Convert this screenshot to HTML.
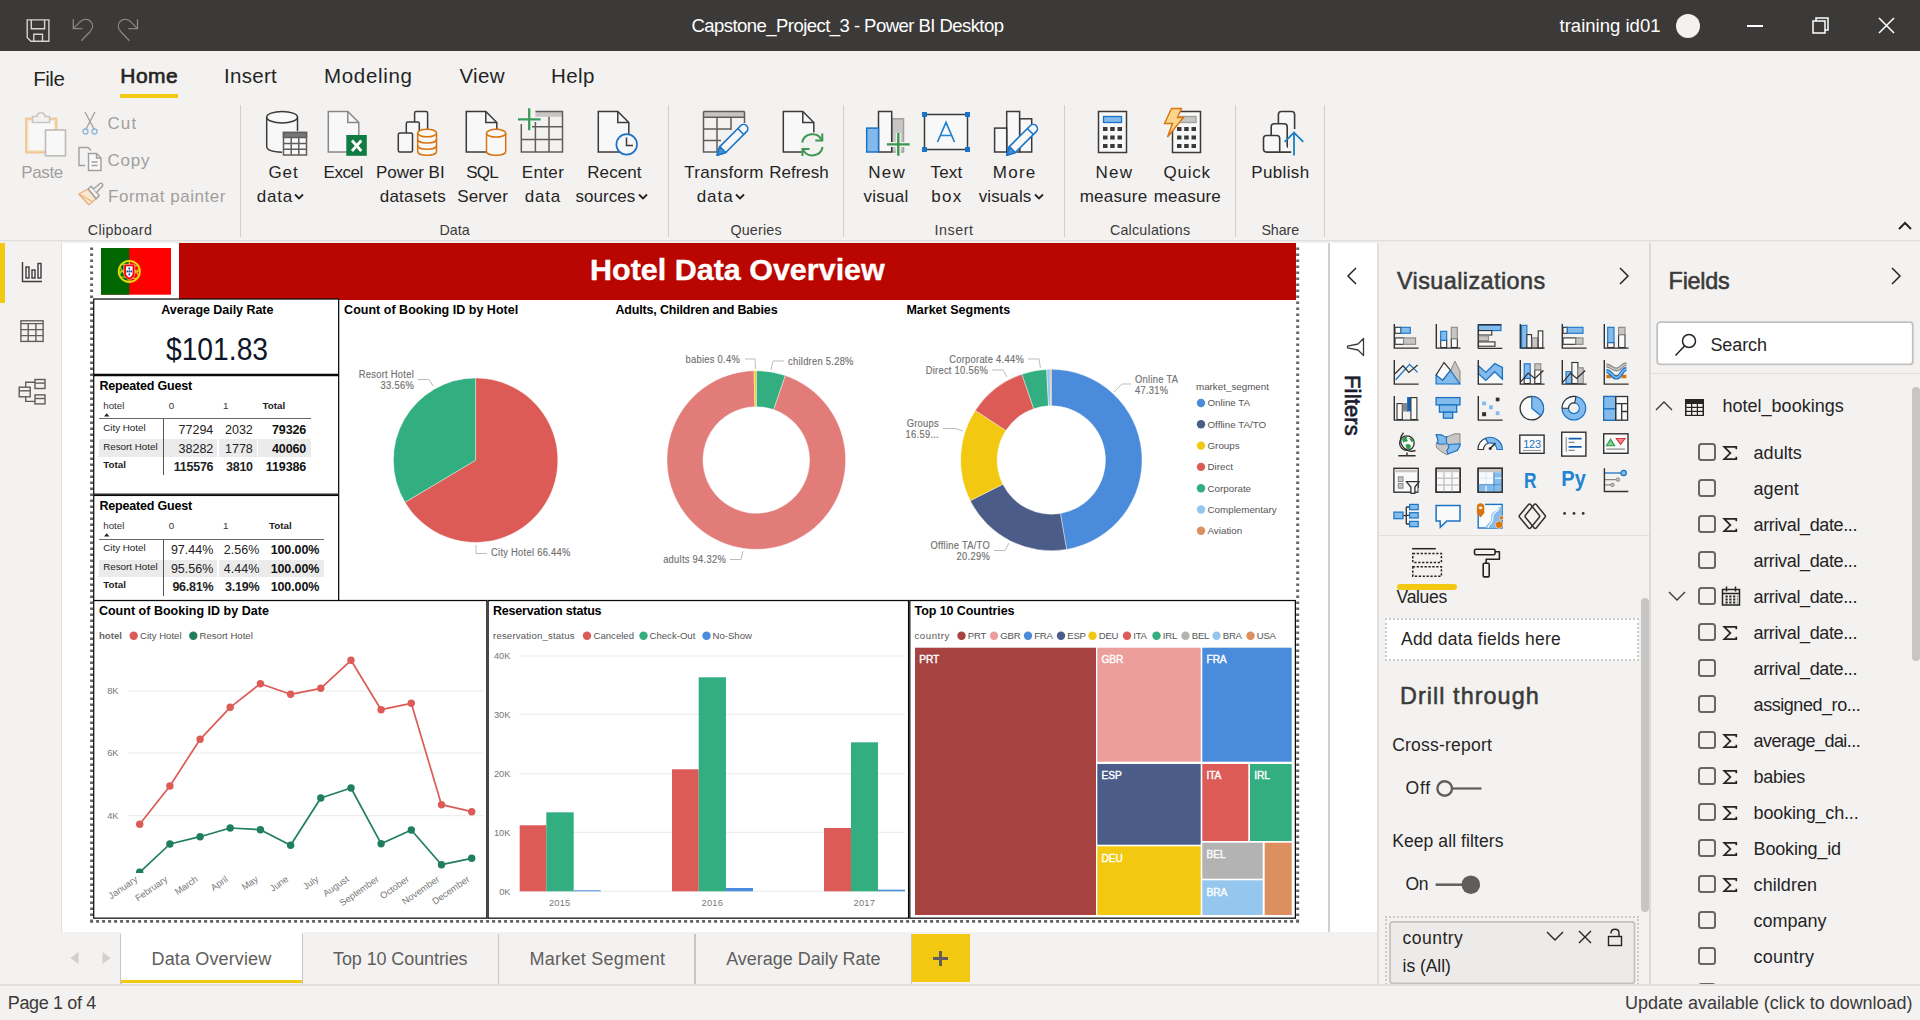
<!DOCTYPE html>
<html><head><meta charset="utf-8"><title>Capstone_Project_3 - Power BI Desktop</title>
<style>
html,body{margin:0;padding:0;}
body{width:1920px;height:1020px;overflow:hidden;background:#f3f2f1;position:relative;font-family:"Liberation Sans",sans-serif;}
.t{position:absolute;white-space:nowrap;line-height:1;font-family:"Liberation Sans",sans-serif;}
.r{position:absolute;display:block;}
svg text{font-family:"Liberation Sans",sans-serif;}
</style></head><body>
<div class="r" style="left:0.0px;top:0.0px;width:1920.0px;height:51.0px;background:#3b3a39;"></div>
<div class="t" style="left:691.5px;top:17.1px;font-size:18.5px;color:#ffffff;letter-spacing:-0.546px;">Capstone_Project_3 - Power BI Desktop</div>
<div class="t" style="left:1559.5px;top:17.1px;font-size:18.5px;color:#ffffff;letter-spacing:0.017px;">training id01</div>
<div class="r" style="left:1675.8px;top:14.0px;width:24.0px;height:24.0px;background:#f3f2f1;border-radius:50%;"></div>
<svg class="r" style="left:24.0px;top:15.5px;" width="28" height="28"><g fill="none" stroke="#d6d4d2" stroke-width="1.400">
<path d="M3.200 3.900H24.900V25.200H6.900L3.200 21.500Z"/><path d="M7.300 3.900V12.700H20.600V3.900"/><path d="M9.800 25.200V18.300H18.500V25.200"/></g></svg>
<svg class="r" style="left:68.0px;top:15.0px;" width="28" height="28"><g fill="none" stroke="#8a8886" stroke-width="1.300">
<path d="M5.300 4.200V13.700H14.500"/><path d="M5.600 13.400L11.500 7.400C14.500 4 19.500 3.300 22.500 6.300C25.500 9.300 25 13.500 22 16.800L13.300 25.700"/></g></svg>
<svg class="r" style="left:114.0px;top:15.0px;" width="28" height="28"><g fill="none" stroke="#8a8886" stroke-width="1.300">
<path d="M23.500 4.200V13.700H14.300"/><path d="M23.200 13.400L17.300 7.400C14.300 4 9.300 3.300 6.300 6.300C3.300 9.300 3.800 13.500 6.800 16.800L15.500 25.700"/></g></svg>
<div class="r" style="left:1747.0px;top:25.0px;width:16.0px;height:1.5px;background:#ffffff;"></div>
<svg class="r" style="left:1810.0px;top:14.5px;" width="22" height="22"><g fill="none" stroke="#fff" stroke-width="1.5"><rect x="3" y="6" width="12" height="12"/><path d="M6 6v-3h12v12h-3"/></g></svg>
<svg class="r" style="left:1876.4px;top:15.0px;" width="22" height="22"><g fill="none" stroke="#fff" stroke-width="1.5"><path d="M3 3l15 15M18 3L3 18"/></g></svg>
<div class="t" style="left:33.2px;top:68.6px;font-size:20.5px;color:#252423;letter-spacing:-0.478px;">File</div>
<div class="t" style="left:120.3px;top:65.2px;font-size:21px;color:#252423;letter-spacing:0.461px;-webkit-text-stroke:.65px #252423;">Home</div>
<div class="r" style="left:120.0px;top:94.0px;width:58.0px;height:4.0px;background:#f2c811;"></div>
<div class="t" style="left:224.0px;top:65.6px;font-size:20.5px;color:#252423;letter-spacing:0.305px;">Insert</div>
<div class="t" style="left:324.0px;top:65.6px;font-size:20.5px;color:#252423;letter-spacing:0.686px;">Modeling</div>
<div class="t" style="left:459.5px;top:65.6px;font-size:20.5px;color:#252423;letter-spacing:0.312px;">View</div>
<div class="t" style="left:551.0px;top:65.6px;font-size:20.5px;color:#252423;letter-spacing:0.445px;">Help</div>
<div class="r" style="left:0.0px;top:240.0px;width:1920.0px;height:3.0px;background:linear-gradient(#e6e5e4,#f3f2f1);"></div>
<div class="r" style="left:0.0px;top:240.0px;width:1920.0px;height:1.0px;background:#e1dfdd;"></div>
<svg class="r" style="left:1897.0px;top:220.0px;" width="16" height="12"><path d="M2 9l6-6 6 6" fill="none" stroke="#252423" stroke-width="2"/></svg>
<div class="r" style="left:0.0px;top:243.0px;width:62.0px;height:689.0px;background:#f3f2f1;"></div>
<div class="r" style="left:0.0px;top:243.0px;width:5.0px;height:60.0px;background:#f2c811;"></div>
<div class="r" style="left:61.0px;top:243.0px;width:1.0px;height:689.0px;background:#e1dfdd;"></div>
<svg class="r" style="left:20.0px;top:260.0px;" width="24" height="24"><g fill="none" stroke="#3b3a39" stroke-width="1.4"><path d="M2.5 2v19.5h19.5"/><rect x="6" y="7" width="3" height="11"/><rect x="12" y="10" width="3" height="8"/><rect x="18" y="3.5" width="3" height="14.5"/></g></svg>
<svg class="r" style="left:19.0px;top:319.0px;" width="26" height="24"><g fill="none" stroke="#605e5c" stroke-width="1.400"><rect x="1.900" y="1.800" width="22.200" height="20.600"/><path d="M1.900 4.600H24.100M1.900 10.600H24.100M1.900 16.600H24.100M9.200 4.600V22.400M16.900 4.600V22.400"/></g></svg>
<svg class="r" style="left:18.0px;top:377.0px;" width="29" height="29"><g fill="none" stroke="#605e5c" stroke-width="1.400"><rect x="1.200" y="10.200" width="11" height="9.600"/><path d="M1.200 13.800H12.200"/><rect x="17" y="2.500" width="10" height="9"/><path d="M17 6.100H27"/><rect x="17" y="17.900" width="10" height="9"/><path d="M17 21.500H27"/><path d="M7.700 10.200V5.200H17M7.700 19.800V24.400H17"/></g></svg>
<div class="r" style="left:62.0px;top:243.0px;width:1266.0px;height:689.0px;background:#ffffff;"></div>
<div class="r" style="left:1328.0px;top:243.0px;width:2.0px;height:689.0px;background:#d2d0ce;"></div>
<div class="r" style="left:62.0px;top:932.0px;width:1266.0px;height:52.0px;background:#f3f2f1;"></div>
<div class="r" style="left:0.0px;top:932.0px;width:62.0px;height:52.0px;background:#f3f2f1;"></div>
<svg class="r" style="left:66.0px;top:948.0px;" width="50" height="20"><path d="M12.500 4v12l-8-6zM36.500 4v12l8-6z" fill="#d2d0ce"/></svg>
<div class="r" style="left:120.0px;top:934.0px;width:1.5px;height:50.0px;background:#c8c6c4;"></div>
<div class="r" style="left:121.0px;top:932.0px;width:181.0px;height:49.0px;background:#ffffff;"></div>
<div class="r" style="left:121.0px;top:980.0px;width:181.0px;height:3.0px;background:#f2c811;"></div>
<div class="t" style="left:151.6px;top:949.6px;font-size:18px;color:#605e5c;letter-spacing:0.13px;">Data Overview</div>
<div class="r" style="left:301.5px;top:934.0px;width:1.5px;height:50.0px;background:#c8c6c4;"></div>
<div class="r" style="left:497.5px;top:934.0px;width:1.5px;height:50.0px;background:#c8c6c4;"></div>
<div class="r" style="left:694.3px;top:934.0px;width:1.5px;height:50.0px;background:#c8c6c4;"></div>
<div class="r" style="left:910.5px;top:934.0px;width:1.5px;height:50.0px;background:#c8c6c4;"></div>
<div class="t" style="left:333.0px;top:949.6px;font-size:18px;color:#605e5c;letter-spacing:-0.099px;">Top 10 Countries</div>
<div class="t" style="left:529.4px;top:949.6px;font-size:18px;color:#605e5c;letter-spacing:0.272px;">Market Segment</div>
<div class="t" style="left:726.2px;top:949.6px;font-size:18px;color:#605e5c;letter-spacing:-0.021px;">Average Daily Rate</div>
<div class="r" style="left:911.5px;top:933.5px;width:58.5px;height:48.0px;background:#f2c811;"></div>
<div class="r" style="left:933.0px;top:957.0px;width:15.0px;height:3.0px;background:#605e5c;"></div>
<div class="r" style="left:939.0px;top:951.0px;width:3.0px;height:15.0px;background:#605e5c;"></div>
<div class="r" style="left:0.0px;top:984.0px;width:1920.0px;height:36.0px;background:#f3f2f1;"></div>
<div class="r" style="left:0.0px;top:984.0px;width:1920.0px;height:1.0px;background:#e1dfdd;"></div>
<div class="t" style="left:8.0px;top:993.8px;font-size:18px;color:#3b3a39;letter-spacing:-0.3px;">Page 1 of 4</div>
<div class="t" style="left:1912.0px;top:993.8px;font-size:18px;color:#3b3a39;letter-spacing:-0.3px;transform:translateX(-100%);transform-origin:right center;">Update available (click to download)</div>
<div class="r" style="left:240.0px;top:105.0px;width:1.0px;height:132.0px;background:#d2d0ce;"></div>
<div class="r" style="left:668.0px;top:105.0px;width:1.0px;height:132.0px;background:#d2d0ce;"></div>
<div class="r" style="left:843.0px;top:105.0px;width:1.0px;height:132.0px;background:#d2d0ce;"></div>
<div class="r" style="left:1064.0px;top:105.0px;width:1.0px;height:132.0px;background:#d2d0ce;"></div>
<div class="r" style="left:1235.0px;top:105.0px;width:1.0px;height:132.0px;background:#d2d0ce;"></div>
<div class="r" style="left:1324.0px;top:105.0px;width:1.0px;height:132.0px;background:#d2d0ce;"></div>
<svg class="r" style="left:22.0px;top:109.5px;" width="46" height="52"><g fill="none" stroke-width="1.500">
<rect x="4.300" y="8.800" width="29.800" height="33.500" fill="#f8f8f8" stroke="#f0c896" stroke-width="2.400"/><rect x="6" y="10.500" width="26.500" height="30" fill="none" stroke="#fae6cb" stroke-width="1.400"/>
<path d="M10.500 12.500V6.500h4.500c0-5 8-5 8 0h4.500v6z" stroke="#c8c6c4" fill="#f3f2f1"/>
<rect x="23.500" y="20" width="20" height="25.800" stroke="#bebbb8" fill="#f8f8f8" stroke-width="1.600"/></g></svg>
<svg class="r" style="left:80.0px;top:110.0px;" width="20" height="26"><g fill="none" stroke="#a19f9d" stroke-width="1.3"><path d="M5 2l9 17M15 2L6 19"/><circle cx="5.500" cy="21.500" r="2.500" stroke="#8fb5d6"/><circle cx="14.500" cy="21.500" r="2.500" stroke="#8fb5d6"/></g></svg>
<svg class="r" style="left:77.0px;top:145.0px;" width="26" height="28"><g fill="none" stroke="#a19f9d" stroke-width="1.4"><path d="M8 20.500h-6v-18h9l3 3"/><path d="M11.500 8.500h8l4.500 4.500v12.500h-12.500z" fill="#f8f8f8"/><path d="M19.500 8.500v4.500h4.500M14.500 17h6M14.500 20.500h6"/></g></svg>
<svg class="r" style="left:77.0px;top:180.0px;" width="28" height="28"><g fill="none" stroke-width="1.400" stroke-linejoin="round"><path d="M1.800 14L11.100 9 19.200 18.700 11.800 24.700Z" fill="#fbe7d0" stroke="#eab27c"/><path d="M1.800 14L15 21.500" stroke="#eab27c"/><path d="M11.100 9L14.200 6.300 22.300 15.600 19.200 18.700Z" stroke="#a19f9d" fill="#f3f2f1"/><path d="M16.500 9L23 3.500c1.500-1 3.500 1 2.500 2.500L19.500 12.500" stroke="#a19f9d" fill="#f3f2f1"/></g></svg>
<svg class="r" style="left:262.0px;top:108.0px;" width="48" height="50"><g fill="none" stroke="#3b3a39" stroke-width="1.500">
<path d="M4.700 9.200V38.500C4.700 41.500 10 44 21 44.200V9.200Z" fill="#f8f8f8" stroke="none"/><rect x="20" y="9" width="15.500" height="17" fill="#f8f8f8" stroke="none"/>
<ellipse cx="20.100" cy="9.200" rx="15.400" ry="5.700" fill="#f8f8f8"/><path d="M4.700 9.200V38.500C4.700 41.500 10 43.800 20 44.200M35.500 9.200V23"/>
<rect x="21.500" y="24.500" width="23" height="22.500" fill="#f8f8f8" stroke="#605e5c"/><rect x="21.500" y="24.500" width="23" height="5" fill="#797775" stroke="#605e5c"/>
<path d="M21.500 35.500H44.500M21.500 41.300H44.500M29.200 29.500V47M36.800 29.500V47" stroke="#605e5c"/></g></svg>
<svg class="r" style="left:324.0px;top:108.0px;" width="46" height="50"><g fill="none" stroke-width="1.500"><path d="M4.300 3.500H23.800L34.800 14.500V44H4.300Z" fill="#f8f8f8" stroke="#8a8886"/><path d="M23.800 3.500V14.500H34.800" stroke="#8a8886" fill="none"/>
<rect x="22.300" y="27" width="20.500" height="20.800" fill="#107c41"/><path d="M28 32.500L37.300 43M37.300 32.500L28 43" stroke="#fff" stroke-width="2.800"/></g></svg>
<svg class="r" style="left:394.0px;top:108.0px;" width="46" height="50"><g fill="#f8f8f8" stroke="#3b3a39" stroke-width="1.500"><path d="M20.600 14V5c0-1 .5-1.500 1.500-1.500h10c1 0 1.500.5 1.500 1.500V24"/><path d="M12.300 25V15.500c0-1 .5-1.500 1.500-1.500h10c1 0 1.500.5 1.500 1.500V25"/><rect x="4.300" y="24.900" width="14.200" height="19.100" rx="1.500"/>
<g stroke="#d9730d"><path d="M23.700 25V43.500c0 2.200 4 3.800 9.400 3.800s9.400-1.600 9.400-3.800V25"/><ellipse cx="33.100" cy="25" rx="9.400" ry="3.800"/><path d="M23.700 31.200c0 2.200 4 3.800 9.400 3.800s9.400-1.600 9.400-3.800M23.700 37.400c0 2.200 4 3.800 9.400 3.800s9.400-1.600 9.400-3.800" fill="none"/></g></g></svg>
<svg class="r" style="left:462.0px;top:108.0px;" width="46" height="50"><g fill="#f8f8f8" stroke-width="1.500"><path d="M4.300 3.500H23.800L34.800 14.500V44H4.300Z" fill="#f8f8f8" stroke="#3b3a39"/><path d="M23.800 3.500V14.500H34.800" stroke="#3b3a39" fill="none"/>
<g stroke="#d9730d"><path d="M24.500 25.200V43.500c0 2.200 4 3.800 9.600 3.800s9.600-1.600 9.600-3.800V25.200"/><ellipse cx="34.100" cy="25.200" rx="9.600" ry="3.900"/></g></g></svg>
<svg class="r" style="left:518.0px;top:106.0px;" width="50" height="52"><g fill="none" stroke-width="1.500"><rect x="17.400" y="6" width="27" height="4.800" fill="#c8c6c4"/><path d="M17.400 5.500H44.500V46H3.300V18" stroke="#605e5c"/><path d="M3.300 33.600H44.500M14 20.700H44.500M17.400 16V46M31 10.800V46" stroke="#605e5c"/><path d="M0 13.400H22.600M11.200 2.300V24.200" stroke="#3a9b5c" stroke-width="2.300"/></g></svg>
<svg class="r" style="left:594.0px;top:108.0px;" width="46" height="50"><g fill="#f8f8f8" stroke-width="1.500"><path d="M4.300 3.500H23.800L34.800 14.500V44H4.300Z" fill="#f8f8f8" stroke="#3b3a39"/><path d="M23.800 3.500V14.500H34.800" stroke="#3b3a39" fill="none"/>
<circle cx="32.700" cy="36.400" r="10.300" stroke="#1a73c7" stroke-width="1.700"/><path d="M32.500 29.500V37.500H39" stroke="#3b3a39" fill="none"/></g></svg>
<svg class="r" style="left:700.0px;top:108.0px;" width="50" height="50"><g fill="none" stroke-width="1.500"><rect x="3.500" y="3.500" width="41" height="5.500" fill="#c8c6c4" stroke="none"/><path d="M3.500 3.500H44.500M3.500 9.300H44.500" stroke="#605e5c"/><path d="M3.500 3.500V44H20M44.500 3.500V15M3.500 21H31M3.500 32.500H21M17 9.300V44M31 9.300V22" stroke="#605e5c"/>
<g transform="translate(17.1 47.2) rotate(-45)" stroke="#1a73c7" stroke-width="1.600" stroke-linejoin="round"><path d="M0 0L8-4.200H37.500a4.200 4.200 0 0 1 0 8.400H8Z" fill="#f8f8f8"/><path d="M0 0L8-4.200V4.200Z" fill="#4a90d9"/><path d="M33.500-4.200V4.200" fill="none"/></g></g></svg>
<svg class="r" style="left:778.5px;top:108.0px;" width="48" height="50"><g fill="#f8f8f8" stroke-width="1.500"><path d="M4.300 3.500H23.800L34.800 14.500V44H4.300Z" fill="#f8f8f8" stroke="#3b3a39"/><path d="M23.800 3.500V14.500H34.800" stroke="#3b3a39" fill="none"/>
<circle cx="33.400" cy="36.800" r="12.500" stroke="none" fill="#f3f2f1"/>
<g fill="none" stroke="#3a9650" stroke-width="2"><path d="M23.200 34.500a10.400 10.400 0 0 1 19.500-2.500M43.600 39a10.400 10.400 0 0 1 -19.500 2.600"/><path d="M43.300 25.500V32.500H36.300M23.500 48V41H30.500"/></g></g></svg>
<svg class="r" style="left:862.0px;top:108.0px;" width="50" height="52"><g stroke-width="1.500"><rect x="30.100" y="10.800" width="11.400" height="33.200" fill="#c8c6c4" stroke="#a19f9d"/><rect x="16.500" y="3.500" width="13.200" height="40.500" fill="#f8f8f8" stroke="#3b3a39"/><rect x="4.700" y="20.100" width="11.800" height="23.900" fill="#83b9ec" stroke="#1a73c7"/>
<path d="M36.300 25V47.800M24.900 36.400H47.700" stroke="#f3f2f1" stroke-width="5" fill="none"/><path d="M36.300 25V47.800M24.900 36.400H47.700" stroke="#3a9650" stroke-width="2.400" fill="none"/></g></svg>
<svg class="r" style="left:920.0px;top:110.0px;" width="52" height="44"><g><rect x="4.500" y="4.500" width="43" height="35" fill="#f8f8f8" stroke="#3b3a39" stroke-width="1.500"/><g fill="#1a73c7"><rect x="2" y="2" width="5" height="5"/><rect x="45" y="2" width="5" height="5"/><rect x="2" y="37" width="5" height="5"/><rect x="45" y="37" width="5" height="5"/></g>
<path d="M17.500 32L26 12.500 34.500 32M20.500 25.500H31.500" fill="none" stroke="#2283d0" stroke-width="1.700"/></g></svg>
<svg class="r" style="left:990.0px;top:108.0px;" width="50" height="52"><g stroke-width="1.500" fill="#f8f8f8"><rect x="29.600" y="10.800" width="12.100" height="33.200" stroke="#3b3a39"/><rect x="16.700" y="3.500" width="12.900" height="40.500" stroke="#3b3a39"/><rect x="4.600" y="20.100" width="12.100" height="23.900" stroke="#3b3a39"/>
<g transform="translate(16.7 47.2) rotate(-45)" stroke="#1a73c7" stroke-width="1.600" stroke-linejoin="round"><path d="M0 0L8-4.200H37.500a4.200 4.200 0 0 1 0 8.400H8Z" fill="#f8f8f8"/><path d="M0 0L8-4.200V4.200Z" fill="#4a90d9"/><path d="M33.500-4.200V4.200" fill="none"/></g></g></svg>
<svg class="r" style="left:1094.0px;top:108.0px;" width="40" height="50"><g><rect x="4.500" y="3.500" width="28" height="41" fill="#f8f8f8" stroke="#3b3a39" stroke-width="1.500"/><rect x="9.500" y="8.500" width="18" height="6" fill="#83b9ec" stroke="#1a73c7" stroke-width="1.300"/>
<g fill="#3b3a39"><rect x="9" y="19" width="4.500" height="4"/><rect x="16.200" y="19" width="4.500" height="4"/><rect x="23.500" y="19" width="4.500" height="4"/><rect x="9" y="27.500" width="4.500" height="4"/><rect x="16.200" y="27.500" width="4.500" height="4"/><rect x="23.500" y="27.500" width="4.500" height="4"/><rect x="9" y="36" width="4.500" height="4"/><rect x="16.200" y="36" width="4.500" height="4"/><rect x="23.500" y="36" width="4.500" height="4"/></g></g></svg>
<svg class="r" style="left:1160.0px;top:106.0px;" width="46" height="52"><g><rect x="12.500" y="5.500" width="28" height="41" fill="#f8f8f8" stroke="#3b3a39" stroke-width="1.500"/><rect x="20" y="10.500" width="16" height="6" fill="#c8c6c4" stroke="#a19f9d" stroke-width="1.300"/>
<g fill="#3b3a39"><rect x="17" y="21" width="4.500" height="4"/><rect x="24.200" y="21" width="4.500" height="4"/><rect x="31.500" y="21" width="4.500" height="4"/><rect x="17" y="29.500" width="4.500" height="4"/><rect x="24.200" y="29.500" width="4.500" height="4"/><rect x="31.500" y="29.500" width="4.500" height="4"/><rect x="17" y="38" width="4.500" height="4"/><rect x="24.200" y="38" width="4.500" height="4"/><rect x="31.500" y="38" width="4.500" height="4"/></g>
<path d="M11.500 2.500H21.500L17.500 11.500H23.500L7.500 31 12.500 17.500H4.500Z" fill="#fbd58a" stroke="#d9730d" stroke-width="1.400" stroke-linejoin="miter"/></g></svg>
<svg class="r" style="left:1258.0px;top:108.0px;" width="52" height="52"><g fill="#f8f8f8" stroke="#3b3a39" stroke-width="1.600"><path d="M20.400 15.700V6.500c0-2 1-3 3-3h10.200c2 0 3 1 3 3V21"/><path d="M13.200 27.500V18.700c0-2 1-3 3-3h10c2 0 3 1 3 3V44.100"/><path d="M18.700 27.500H8.500c-2 0-3 1-3 3v10.600c0 2 1 3 3 3H33.200M21.700 44V30.500c0-2-1-3-3-3"/>
<path d="M36 47.500V24.800M26.700 33.800l9.300-9.300 9.300 9.300" stroke="#1a7fc4" fill="none" stroke-width="1.800"/></g></svg>
<div class="t" style="left:21.2px;top:163.6px;font-size:17px;color:#a19f9d;letter-spacing:-0.342px;">Paste</div>
<div class="t" style="left:107.5px;top:115.4px;font-size:17px;color:#a19f9d;letter-spacing:1.073px;">Cut</div>
<div class="t" style="left:107.5px;top:151.8px;font-size:17px;color:#a19f9d;letter-spacing:0.805px;">Copy</div>
<div class="t" style="left:108.0px;top:187.6px;font-size:17px;color:#a19f9d;letter-spacing:0.521px;">Format painter</div>
<div class="t" style="left:268.5px;top:163.6px;font-size:17px;color:#252423;letter-spacing:0.851px;">Get</div>
<div class="t" style="left:256.7px;top:187.6px;font-size:17px;color:#252423;letter-spacing:0.773px;">data</div>
<div class="t" style="left:323.5px;top:163.6px;font-size:17px;color:#252423;letter-spacing:-0.443px;">Excel</div>
<div class="t" style="left:376.0px;top:163.6px;font-size:17px;color:#252423;letter-spacing:-0.053px;">Power BI</div>
<div class="t" style="left:379.7px;top:187.6px;font-size:17px;color:#252423;letter-spacing:0.263px;">datasets</div>
<div class="t" style="left:466.2px;top:163.6px;font-size:17px;color:#252423;letter-spacing:-0.708px;">SQL</div>
<div class="t" style="left:457.2px;top:187.6px;font-size:17px;color:#252423;letter-spacing:0.107px;">Server</div>
<div class="t" style="left:521.7px;top:163.6px;font-size:17px;color:#252423;letter-spacing:0.368px;">Enter</div>
<div class="t" style="left:524.7px;top:187.6px;font-size:17px;color:#252423;letter-spacing:0.773px;">data</div>
<div class="t" style="left:587.2px;top:163.6px;font-size:17px;color:#252423;letter-spacing:0.108px;">Recent</div>
<div class="t" style="left:575.5px;top:187.6px;font-size:17px;color:#252423;letter-spacing:0.047px;">sources</div>
<div class="t" style="left:684.2px;top:163.6px;font-size:17px;color:#252423;letter-spacing:0.285px;">Transform</div>
<div class="t" style="left:696.7px;top:187.6px;font-size:17px;color:#252423;letter-spacing:0.939px;">data</div>
<div class="t" style="left:769.2px;top:163.6px;font-size:17px;color:#252423;letter-spacing:0.013px;">Refresh</div>
<div class="t" style="left:868.2px;top:163.6px;font-size:17px;color:#252423;letter-spacing:1.296px;">New</div>
<div class="t" style="left:863.5px;top:187.6px;font-size:17px;color:#252423;letter-spacing:0.268px;">visual</div>
<div class="t" style="left:930.5px;top:163.6px;font-size:17px;color:#252423;letter-spacing:0.141px;">Text</div>
<div class="t" style="left:931.2px;top:187.6px;font-size:17px;color:#252423;letter-spacing:1.347px;">box</div>
<div class="t" style="left:992.7px;top:163.6px;font-size:17px;color:#252423;letter-spacing:1.291px;">More</div>
<div class="t" style="left:978.7px;top:187.6px;font-size:17px;color:#252423;letter-spacing:0.107px;">visuals</div>
<div class="t" style="left:1095.5px;top:163.6px;font-size:17px;color:#252423;letter-spacing:1.296px;">New</div>
<div class="t" style="left:1079.7px;top:187.6px;font-size:17px;color:#252423;letter-spacing:0.211px;">measure</div>
<div class="t" style="left:1163.5px;top:163.6px;font-size:17px;color:#252423;letter-spacing:0.787px;">Quick</div>
<div class="t" style="left:1153.7px;top:187.6px;font-size:17px;color:#252423;letter-spacing:0.161px;">measure</div>
<div class="t" style="left:1251.2px;top:163.6px;font-size:17px;color:#252423;letter-spacing:0.358px;">Publish</div>
<svg class="r" style="left:294.0px;top:193.0px;" width="10" height="8"><path d="M1 1.5l4 4 4-4" fill="none" stroke="#252423" stroke-width="1.8"/></svg>
<svg class="r" style="left:638.0px;top:193.0px;" width="10" height="8"><path d="M1 1.5l4 4 4-4" fill="none" stroke="#252423" stroke-width="1.8"/></svg>
<svg class="r" style="left:735.0px;top:193.0px;" width="10" height="8"><path d="M1 1.5l4 4 4-4" fill="none" stroke="#252423" stroke-width="1.8"/></svg>
<svg class="r" style="left:1034.3px;top:193.0px;" width="10" height="8"><path d="M1 1.5l4 4 4-4" fill="none" stroke="#252423" stroke-width="1.8"/></svg>
<div class="t" style="left:87.7px;top:222.5px;font-size:14.3px;color:#3b3a39;letter-spacing:0.374px;">Clipboard</div>
<div class="t" style="left:439.4px;top:222.5px;font-size:14.3px;color:#3b3a39;letter-spacing:-0.002px;">Data</div>
<div class="t" style="left:730.4px;top:222.5px;font-size:14.3px;color:#3b3a39;letter-spacing:0.188px;">Queries</div>
<div class="t" style="left:934.4px;top:222.5px;font-size:14.3px;color:#3b3a39;letter-spacing:0.586px;">Insert</div>
<div class="t" style="left:1109.9px;top:222.5px;font-size:14.3px;color:#3b3a39;letter-spacing:0.21px;">Calculations</div>
<div class="t" style="left:1261.4px;top:222.5px;font-size:14.3px;color:#3b3a39;letter-spacing:-0.115px;">Share</div>
<svg class="r" style="left:88.0px;top:244.0px;" width="1214" height="682"><g stroke="#636363" fill="none"><path d="M3.600 3.500V676" stroke-width="3" stroke-dasharray="2.500 3.500"/><path d="M1209.700 3.500V676" stroke-width="3" stroke-dasharray="2.500 3.500"/><path d="M2.100 677.400H1211.200" stroke-width="2.600" stroke-dasharray="3 3"/></g></svg>
<div class="r" style="left:179.0px;top:243.0px;width:1117.0px;height:57.0px;background:#BA0600;"></div>
<div class="t" style="left:590.2px;top:256.0px;font-size:28.8px;color:#ffffff;font-weight:700;transform:scaleX(1.0585);transform-origin:left center;-webkit-text-stroke:.35px #fff;">Hotel Data Overview</div>
<svg class="r" style="left:100.5px;top:248.1px;" width="70.5" height="46.7" viewBox="0 0 70.5 46.7"><rect width="70.500" height="46.700" fill="#ff0000"/><rect width="28.300" height="46.700" fill="#006600"/>
<circle cx="28.300" cy="23.400" r="10.600" fill="none" stroke="#e6e000" stroke-width="1.800"/>
<g fill="none" stroke="#d8d020" stroke-width="1.300" opacity=".9"><ellipse cx="28.300" cy="23.400" rx="10.600" ry="4" transform="rotate(-25 28.300 23.400)"/><ellipse cx="28.300" cy="23.400" rx="10.600" ry="4.500" transform="rotate(35 28.300 23.400)"/><path d="M17.700 23.400H38.900M28.300 12.800V34"/></g>
<path d="M22.800 16.300h11v9.500c0 4-5.500 6.200-5.500 6.200s-5.500-2.200-5.500-6.200z" fill="#ff0000" stroke="#fff" stroke-width=".5"/>
<path d="M25 18.300h6.600v7c0 2.800-3.300 4.300-3.300 4.300s-3.300-1.500-3.300-4.300z" fill="#fff"/>
<g fill="#0a3ea8"><rect x="27.500" y="19.500" width="1.600" height="1.900"/><rect x="27.500" y="22.500" width="1.600" height="1.900"/><rect x="27.500" y="25.500" width="1.600" height="1.900"/><rect x="25.500" y="22.500" width="1.600" height="1.900"/><rect x="29.500" y="22.500" width="1.600" height="1.900"/></g></svg>
<svg class="r" style="left:90.0px;top:295.0px;" width="1210" height="626"><rect x="3.72" y="4.02" width="244.95" height="75.35" fill="#fff" stroke="#0a0a0a" stroke-width="1.25"/><rect x="3.72" y="80.62" width="244.95" height="118.55" fill="#fff" stroke="#0a0a0a" stroke-width="1.25"/><rect x="3.72" y="200.43" width="244.95" height="105.75" fill="#fff" stroke="#0a0a0a" stroke-width="1.25"/><rect x="3.72" y="305.52" width="393.15" height="317.65" fill="#fff" stroke="#0a0a0a" stroke-width="1.25"/><rect x="398.12" y="305.52" width="420.45" height="317.65" fill="#fff" stroke="#0a0a0a" stroke-width="1.25"/><rect x="819.83" y="305.52" width="385.55" height="317.65" fill="#fff" stroke="#0a0a0a" stroke-width="1.25"/></svg>
<div class="t" style="left:161.3px;top:303.5px;font-size:12.5px;color:#000;font-weight:700;letter-spacing:-0.041px;">Average Daily Rate</div>
<div class="t" style="left:216.6px;top:333.6px;font-size:31.4px;color:#0f1628;transform:translateX(-50%) scaleX(0.9);transform-origin:center center;">$101.83</div>
<div class="t" style="left:99.5px;top:379.7px;font-size:12.5px;color:#000;font-weight:700;letter-spacing:-0.191px;">Repeated Guest</div>
<div class="t" style="left:103.2px;top:401.2px;font-size:9.8px;color:#333;">hotel</div>
<div class="t" style="left:168.8px;top:401.2px;font-size:9.8px;color:#333;">0</div>
<div class="t" style="left:223.0px;top:401.2px;font-size:9.8px;color:#333;">1</div>
<div class="t" style="left:262.6px;top:401.2px;font-size:9.8px;color:#222;font-weight:700;">Total</div>
<svg class="r" style="left:104.0px;top:412.5px;" width="8" height="5"><path d="M0 3.600l2.700-3.400 2.700 3.400z" fill="#222"/></svg>
<div class="r" style="left:98.7px;top:439.3px;width:212.3px;height:17.4px;background:#ebebeb;"></div>
<div class="r" style="left:217.4px;top:439.3px;width:1.6px;height:17.4px;background:#fff;"></div>
<div class="r" style="left:256.8px;top:439.3px;width:1.6px;height:17.4px;background:#fff;"></div>
<div class="r" style="left:98.7px;top:418.3px;width:212.3px;height:1.0px;background:#666;"></div>
<div class="r" style="left:163.0px;top:419.3px;width:1.0px;height:56.0px;background:#555;"></div>
<div class="t" style="left:103.2px;top:423.1px;font-size:9.8px;color:#222;">City Hotel</div>
<div class="t" style="left:213.3px;top:424.0px;font-size:12.5px;color:#222;transform:translateX(-100%);transform-origin:right center;">77294</div>
<div class="t" style="left:252.8px;top:424.0px;font-size:12.5px;color:#222;transform:translateX(-100%);transform-origin:right center;">2032</div>
<div class="t" style="left:306.2px;top:424.0px;font-size:12.5px;color:#111;font-weight:700;letter-spacing:-0.1px;transform:translateX(-100%);transform-origin:right center;">79326</div>
<div class="t" style="left:103.2px;top:441.6px;font-size:9.8px;color:#222;">Resort Hotel</div>
<div class="t" style="left:213.3px;top:442.5px;font-size:12.5px;color:#222;transform:translateX(-100%);transform-origin:right center;">38282</div>
<div class="t" style="left:252.8px;top:442.5px;font-size:12.5px;color:#222;transform:translateX(-100%);transform-origin:right center;">1778</div>
<div class="t" style="left:306.2px;top:442.5px;font-size:12.5px;color:#111;font-weight:700;letter-spacing:-0.1px;transform:translateX(-100%);transform-origin:right center;">40060</div>
<div class="t" style="left:103.2px;top:459.7px;font-size:9.8px;color:#222;font-weight:700;">Total</div>
<div class="t" style="left:213.3px;top:460.6px;font-size:12.5px;color:#222;font-weight:700;letter-spacing:-0.25px;transform:translateX(-100%);transform-origin:right center;">115576</div>
<div class="t" style="left:252.8px;top:460.6px;font-size:12.5px;color:#222;font-weight:700;letter-spacing:-0.25px;transform:translateX(-100%);transform-origin:right center;">3810</div>
<div class="t" style="left:306.2px;top:460.6px;font-size:12.5px;color:#111;font-weight:700;letter-spacing:-0.1px;transform:translateX(-100%);transform-origin:right center;">119386</div>
<div class="t" style="left:99.5px;top:499.9px;font-size:12.5px;color:#000;font-weight:700;letter-spacing:-0.191px;">Repeated Guest</div>
<div class="t" style="left:103.2px;top:521.4px;font-size:9.8px;color:#333;">hotel</div>
<div class="t" style="left:168.8px;top:521.4px;font-size:9.8px;color:#333;">0</div>
<div class="t" style="left:223.0px;top:521.4px;font-size:9.8px;color:#333;">1</div>
<div class="t" style="left:269.0px;top:521.4px;font-size:9.8px;color:#222;font-weight:700;">Total</div>
<svg class="r" style="left:104.0px;top:532.7px;" width="8" height="5"><path d="M0 3.600l2.700-3.400 2.700 3.400z" fill="#222"/></svg>
<div class="r" style="left:98.7px;top:559.5px;width:225.3px;height:17.4px;background:#ebebeb;"></div>
<div class="r" style="left:217.4px;top:559.5px;width:1.6px;height:17.4px;background:#fff;"></div>
<div class="r" style="left:256.8px;top:559.5px;width:1.6px;height:17.4px;background:#fff;"></div>
<div class="r" style="left:98.7px;top:538.5px;width:225.3px;height:1.0px;background:#666;"></div>
<div class="r" style="left:163.0px;top:539.5px;width:1.0px;height:56.0px;background:#555;"></div>
<div class="t" style="left:103.2px;top:543.3px;font-size:9.8px;color:#222;">City Hotel</div>
<div class="t" style="left:213.3px;top:544.2px;font-size:12.5px;color:#222;transform:translateX(-100%);transform-origin:right center;">97.44%</div>
<div class="t" style="left:259.3px;top:544.2px;font-size:12.5px;color:#222;transform:translateX(-100%);transform-origin:right center;">2.56%</div>
<div class="t" style="left:319.3px;top:544.2px;font-size:12.5px;color:#111;font-weight:700;letter-spacing:-0.1px;transform:translateX(-100%);transform-origin:right center;">100.00%</div>
<div class="t" style="left:103.2px;top:561.8px;font-size:9.8px;color:#222;">Resort Hotel</div>
<div class="t" style="left:213.3px;top:562.7px;font-size:12.5px;color:#222;transform:translateX(-100%);transform-origin:right center;">95.56%</div>
<div class="t" style="left:259.3px;top:562.7px;font-size:12.5px;color:#222;transform:translateX(-100%);transform-origin:right center;">4.44%</div>
<div class="t" style="left:319.3px;top:562.7px;font-size:12.5px;color:#111;font-weight:700;letter-spacing:-0.1px;transform:translateX(-100%);transform-origin:right center;">100.00%</div>
<div class="t" style="left:103.2px;top:579.9px;font-size:9.8px;color:#222;font-weight:700;">Total</div>
<div class="t" style="left:213.3px;top:580.8px;font-size:12.5px;color:#222;font-weight:700;letter-spacing:-0.25px;transform:translateX(-100%);transform-origin:right center;">96.81%</div>
<div class="t" style="left:259.3px;top:580.8px;font-size:12.5px;color:#222;font-weight:700;letter-spacing:-0.25px;transform:translateX(-100%);transform-origin:right center;">3.19%</div>
<div class="t" style="left:319.3px;top:580.8px;font-size:12.5px;color:#111;font-weight:700;letter-spacing:-0.1px;transform:translateX(-100%);transform-origin:right center;">100.00%</div>
<div class="t" style="left:344.1px;top:303.5px;font-size:12.5px;color:#000;font-weight:700;letter-spacing:0.018px;">Count of Booking ID by Hotel</div>
<div class="t" style="left:615.5px;top:303.5px;font-size:12.5px;color:#000;font-weight:700;letter-spacing:-0.177px;">Adults, Children and Babies</div>
<div class="t" style="left:906.4px;top:303.5px;font-size:12.5px;color:#000;font-weight:700;letter-spacing:0.013px;">Market Segments</div>
<div class="t" style="left:98.9px;top:604.6px;font-size:12.5px;color:#000;font-weight:700;letter-spacing:0.021px;">Count of Booking ID by Date</div>
<div class="t" style="left:492.9px;top:604.6px;font-size:12.5px;color:#000;font-weight:700;letter-spacing:-0.186px;">Reservation status</div>
<div class="t" style="left:914.6px;top:604.6px;font-size:12.5px;color:#000;font-weight:700;letter-spacing:-0.079px;">Top 10 Countries</div>
<svg class="r" style="left:340.0px;top:300.0px;" width="957" height="300"><path d="M135.60 160.20L135.60 78.00A82.2 82.2 0 1 1 65.01 202.31Z" fill="#DC5B57" stroke="#fff" stroke-width=".4"/><path d="M135.60 160.20L65.01 202.31A82.2 82.2 0 0 1 135.60 78.00Z" fill="#33AE81" stroke="#fff" stroke-width=".4"/><path d="M416.30 70.70A89.3 89.3 0 0 1 445.39 75.57L433.66 109.61A53.3 53.3 0 0 0 416.30 106.70Z" fill="#33AE81" stroke="#fff" stroke-width=".4"/><path d="M445.39 75.57A89.3 89.3 0 1 1 414.06 70.73L414.96 106.72A53.3 53.3 0 1 0 433.66 109.61Z" fill="#E27C79" stroke="#fff" stroke-width=".4"/><path d="M414.06 70.73A89.3 89.3 0 0 1 416.30 70.70L416.30 106.70A53.3 53.3 0 0 0 414.96 106.72Z" fill="#F2C811" stroke="#fff" stroke-width=".4"/><path d="M711.30 69.30A90.7 90.7 0 0 1 726.56 249.41L720.42 213.43A54.2 54.2 0 0 0 711.30 105.80Z" fill="#4A8BDB" stroke="#fff" stroke-width=".4"/><path d="M726.56 249.41A90.7 90.7 0 0 1 630.23 200.67L662.85 184.30A54.2 54.2 0 0 0 720.42 213.43Z" fill="#4B5C88" stroke="#fff" stroke-width=".4"/><path d="M630.23 200.67A90.7 90.7 0 0 1 635.31 110.49L665.89 130.41A54.2 54.2 0 0 0 662.85 184.30Z" fill="#F2C811" stroke="#fff" stroke-width=".4"/><path d="M635.31 110.49A90.7 90.7 0 0 1 681.92 74.19L693.74 108.72A54.2 54.2 0 0 0 665.89 130.41Z" fill="#DC5B57" stroke="#fff" stroke-width=".4"/><path d="M681.92 74.19A90.7 90.7 0 0 1 706.69 69.42L708.54 105.87A54.2 54.2 0 0 0 693.74 108.72Z" fill="#33AE81" stroke="#fff" stroke-width=".4"/><path d="M706.69 69.42A90.7 90.7 0 0 1 710.22 69.31L710.65 105.80A54.2 54.2 0 0 0 708.54 105.87Z" fill="#94C6EE" stroke="#fff" stroke-width=".4"/><path d="M710.22 69.31A90.7 90.7 0 0 1 711.30 69.30L711.30 105.80A54.2 54.2 0 0 0 710.65 105.80Z" fill="#DE8F5F" stroke="#fff" stroke-width=".4"/><text transform="translate(74.0 77.5) scale(.885 1)" font-size="10.600" fill="#707070" stroke="#707070" stroke-width=".15" text-anchor="end" letter-spacing=".3">Resort Hotel</text><text transform="translate(74.0 88.5) scale(.885 1)" font-size="10.600" fill="#707070" stroke="#707070" stroke-width=".15" text-anchor="end" letter-spacing=".3">33.56%</text><path d="M78.0 79.5L89.0 79.5L93.0 86.0" fill="none" stroke="#bdbdbd" stroke-width="1"/><text transform="translate(151.0 255.5) scale(.885 1)" font-size="10.600" fill="#707070" stroke="#707070" stroke-width=".15" text-anchor="start" letter-spacing=".3">City Hotel 66.44%</text><path d="M136.0 245.0L136.0 253.5L147.0 253.5" fill="none" stroke="#bdbdbd" stroke-width="1"/><text transform="translate(400.0 62.5) scale(.885 1)" font-size="10.600" fill="#707070" stroke="#707070" stroke-width=".15" text-anchor="end" letter-spacing=".3">babies 0.4%</text><path d="M405.0 59.0L415.0 59.0L415.5 69.0" fill="none" stroke="#bdbdbd" stroke-width="1"/><text transform="translate(448.0 64.5) scale(.885 1)" font-size="10.600" fill="#707070" stroke="#707070" stroke-width=".15" text-anchor="start" letter-spacing=".3">children 5.28%</text><path d="M444.0 61.0L433.0 61.0L431.0 70.0" fill="none" stroke="#bdbdbd" stroke-width="1"/><text transform="translate(386.0 262.5) scale(.885 1)" font-size="10.600" fill="#707070" stroke="#707070" stroke-width=".15" text-anchor="end" letter-spacing=".3">adults 94.32%</text><path d="M390.0 259.5L401.0 259.5L403.0 251.0" fill="none" stroke="#bdbdbd" stroke-width="1"/><text transform="translate(684.0 62.5) scale(.885 1)" font-size="10.600" fill="#707070" stroke="#707070" stroke-width=".15" text-anchor="end" letter-spacing=".3">Corporate 4.44%</text><path d="M688.0 59.0L699.0 59.0L700.5 68.0" fill="none" stroke="#bdbdbd" stroke-width="1"/><text transform="translate(648.0 73.5) scale(.885 1)" font-size="10.600" fill="#707070" stroke="#707070" stroke-width=".15" text-anchor="end" letter-spacing=".3">Direct 10.56%</text><path d="M652.0 70.0L663.0 70.0L667.0 77.0" fill="none" stroke="#bdbdbd" stroke-width="1"/><text transform="translate(795.0 82.5) scale(.885 1)" font-size="10.600" fill="#707070" stroke="#707070" stroke-width=".15" text-anchor="start" letter-spacing=".3">Online TA</text><text transform="translate(795.0 93.5) scale(.885 1)" font-size="10.600" fill="#707070" stroke="#707070" stroke-width=".15" text-anchor="start" letter-spacing=".3">47.31%</text><path d="M791.0 84.0L782.0 84.0L774.0 92.0" fill="none" stroke="#bdbdbd" stroke-width="1"/><text transform="translate(599.0 126.5) scale(.885 1)" font-size="10.600" fill="#707070" stroke="#707070" stroke-width=".15" text-anchor="end" letter-spacing=".3">Groups</text><text transform="translate(599.0 137.5) scale(.885 1)" font-size="10.600" fill="#707070" stroke="#707070" stroke-width=".15" text-anchor="end" letter-spacing=".3">16.59...</text><path d="M603.0 128.5L615.0 128.5L623.0 131.0" fill="none" stroke="#bdbdbd" stroke-width="1"/><text transform="translate(650.0 248.5) scale(.885 1)" font-size="10.600" fill="#707070" stroke="#707070" stroke-width=".15" text-anchor="end" letter-spacing=".3">Offline TA/TO</text><text transform="translate(650.0 259.5) scale(.885 1)" font-size="10.600" fill="#707070" stroke="#707070" stroke-width=".15" text-anchor="end" letter-spacing=".3">20.29%</text><path d="M654.0 250.5L665.0 250.5L669.0 243.0" fill="none" stroke="#bdbdbd" stroke-width="1"/><text x="856" y="90" font-size="9.800" fill="#555">market_segment</text><circle cx="861" cy="103.0" r="4.200" fill="#4A8BDB"/><text x="867.5" y="106.3" font-size="9.800" fill="#555">Online TA</text><circle cx="861" cy="124.3" r="4.200" fill="#4B5C88"/><text x="867.5" y="127.6" font-size="9.800" fill="#555">Offline TA/TO</text><circle cx="861" cy="145.6" r="4.200" fill="#F2C811"/><text x="867.5" y="148.9" font-size="9.800" fill="#555">Groups</text><circle cx="861" cy="166.9" r="4.200" fill="#DC5B57"/><text x="867.5" y="170.2" font-size="9.800" fill="#555">Direct</text><circle cx="861" cy="188.2" r="4.200" fill="#33AE81"/><text x="867.5" y="191.5" font-size="9.800" fill="#555">Corporate</text><circle cx="861" cy="209.5" r="4.200" fill="#94C6EE"/><text x="867.5" y="212.8" font-size="9.800" fill="#555">Complementary</text><circle cx="861" cy="230.8" r="4.200" fill="#DE8F5F"/><text x="867.5" y="234.1" font-size="9.800" fill="#555">Aviation</text></svg>
<svg class="r" style="left:95.0px;top:620.0px;" width="392" height="297"><path d="M33 71.0H389" stroke="#eaeaea" stroke-width="1"/><text x="23.5" y="74.2" font-size="9.300" fill="#777777" text-anchor="end">8K</text><path d="M33 133.0H389" stroke="#eaeaea" stroke-width="1"/><text x="23.5" y="136.2" font-size="9.300" fill="#777777" text-anchor="end">6K</text><path d="M33 195.7H389" stroke="#eaeaea" stroke-width="1"/><text x="23.5" y="198.9" font-size="9.300" fill="#777777" text-anchor="end">4K</text><clipPath id="lc"><rect x="0" y="0" width="392" height="253"/></clipPath><g clip-path="url(#lc)"><path d="M44.7 204.3L74.9 166.0L105.1 119.3L135.2 87.3L165.4 63.7L195.6 74.3L225.8 68.3L256.0 40.3L286.1 89.7L316.3 83.3L346.5 184.7L376.7 191.7" fill="none" stroke="#DC5B57" stroke-width="1.700" stroke-linejoin="round"/><circle cx="44.7" cy="204.3" r="3.700" fill="#DC5B57"/><circle cx="74.9" cy="166.0" r="3.700" fill="#DC5B57"/><circle cx="105.1" cy="119.3" r="3.700" fill="#DC5B57"/><circle cx="135.2" cy="87.3" r="3.700" fill="#DC5B57"/><circle cx="165.4" cy="63.7" r="3.700" fill="#DC5B57"/><circle cx="195.6" cy="74.3" r="3.700" fill="#DC5B57"/><circle cx="225.8" cy="68.3" r="3.700" fill="#DC5B57"/><circle cx="256.0" cy="40.3" r="3.700" fill="#DC5B57"/><circle cx="286.1" cy="89.7" r="3.700" fill="#DC5B57"/><circle cx="316.3" cy="83.3" r="3.700" fill="#DC5B57"/><circle cx="346.5" cy="184.7" r="3.700" fill="#DC5B57"/><circle cx="376.7" cy="191.7" r="3.700" fill="#DC5B57"/><path d="M44.7 252.3L74.9 224.0L105.1 216.7L135.2 208.0L165.4 209.7L195.6 225.3L225.8 178.0L256.0 168.0L286.1 223.7L316.3 210.0L346.5 244.7L376.7 238.3" fill="none" stroke="#1F7F5C" stroke-width="1.700" stroke-linejoin="round"/><circle cx="44.7" cy="252.3" r="3.700" fill="#1F7F5C"/><circle cx="74.9" cy="224.0" r="3.700" fill="#1F7F5C"/><circle cx="105.1" cy="216.7" r="3.700" fill="#1F7F5C"/><circle cx="135.2" cy="208.0" r="3.700" fill="#1F7F5C"/><circle cx="165.4" cy="209.7" r="3.700" fill="#1F7F5C"/><circle cx="195.6" cy="225.3" r="3.700" fill="#1F7F5C"/><circle cx="225.8" cy="178.0" r="3.700" fill="#1F7F5C"/><circle cx="256.0" cy="168.0" r="3.700" fill="#1F7F5C"/><circle cx="286.1" cy="223.7" r="3.700" fill="#1F7F5C"/><circle cx="316.3" cy="210.0" r="3.700" fill="#1F7F5C"/><circle cx="346.5" cy="244.7" r="3.700" fill="#1F7F5C"/><circle cx="376.7" cy="238.3" r="3.700" fill="#1F7F5C"/></g><text transform="translate(43.2 260.5) rotate(-35)" font-size="9.300" fill="#777777" text-anchor="end">January</text><text transform="translate(73.4 260.5) rotate(-35)" font-size="9.300" fill="#777777" text-anchor="end">February</text><text transform="translate(103.6 260.5) rotate(-35)" font-size="9.300" fill="#777777" text-anchor="end">March</text><text transform="translate(133.7 260.5) rotate(-35)" font-size="9.300" fill="#777777" text-anchor="end">April</text><text transform="translate(163.9 260.5) rotate(-35)" font-size="9.300" fill="#777777" text-anchor="end">May</text><text transform="translate(194.1 260.5) rotate(-35)" font-size="9.300" fill="#777777" text-anchor="end">June</text><text transform="translate(224.3 260.5) rotate(-35)" font-size="9.300" fill="#777777" text-anchor="end">July</text><text transform="translate(254.5 260.5) rotate(-35)" font-size="9.300" fill="#777777" text-anchor="end">August</text><text transform="translate(284.6 260.5) rotate(-35)" font-size="9.300" fill="#777777" text-anchor="end">September</text><text transform="translate(314.8 260.5) rotate(-35)" font-size="9.300" fill="#777777" text-anchor="end">October</text><text transform="translate(345.0 260.5) rotate(-35)" font-size="9.300" fill="#777777" text-anchor="end">November</text><text transform="translate(375.2 260.5) rotate(-35)" font-size="9.300" fill="#777777" text-anchor="end">December</text><text x="4" y="19" font-size="9.600" fill="#666" font-weight="700">hotel</text><circle cx="38.69999999999999" cy="15.700000000000045" r="4.200" fill="#DC5B57"/><text x="45" y="19" font-size="9.600" fill="#555">City Hotel</text><circle cx="98.30000000000001" cy="15.700000000000045" r="4.200" fill="#1F7F5C"/><text x="104.5" y="19" font-size="9.600" fill="#555">Resort Hotel</text></svg>
<svg class="r" style="left:488.0px;top:620.0px;" width="420" height="297"><path d="M31.3 36.0H417" stroke="#eaeaea" stroke-width="1"/><text x="22.5" y="39.3" font-size="9.300" fill="#777777" text-anchor="end">40K</text><path d="M31.3 94.3H417" stroke="#eaeaea" stroke-width="1"/><text x="22.5" y="97.6" font-size="9.300" fill="#777777" text-anchor="end">30K</text><path d="M31.3 153.7H417" stroke="#eaeaea" stroke-width="1"/><text x="22.5" y="157.0" font-size="9.300" fill="#777777" text-anchor="end">20K</text><path d="M31.3 212.3H417" stroke="#eaeaea" stroke-width="1"/><text x="22.5" y="215.6" font-size="9.300" fill="#777777" text-anchor="end">10K</text><path d="M31.3 271.3H417" stroke="#eaeaea" stroke-width="1"/><text x="22.5" y="274.6" font-size="9.300" fill="#777777" text-anchor="end">0K</text><rect x="31.7" y="205.3" width="26.6" height="66.0" fill="#DC5B57"/><rect x="58.3" y="192.3" width="27.4" height="79.0" fill="#33AE81"/><rect x="85.7" y="270.3" width="27.0" height="1.0" fill="#4A8BDB"/><rect x="184.0" y="149.3" width="26.7" height="122.0" fill="#DC5B57"/><rect x="210.7" y="57.3" width="27.3" height="214.0" fill="#33AE81"/><rect x="238.0" y="268.0" width="27.0" height="3.3" fill="#4A8BDB"/><rect x="336.0" y="208.0" width="27.0" height="63.3" fill="#DC5B57"/><rect x="363.0" y="122.3" width="27.0" height="149.0" fill="#33AE81"/><rect x="390.0" y="269.7" width="27.0" height="1.6" fill="#4A8BDB"/><text x="71.7" y="285.5" font-size="9.300" fill="#777777" text-anchor="middle" letter-spacing=".2">2015</text><text x="224.3" y="285.5" font-size="9.300" fill="#777777" text-anchor="middle" letter-spacing=".2">2016</text><text x="376.3" y="285.5" font-size="9.300" fill="#777777" text-anchor="middle" letter-spacing=".2">2017</text><text x="5" y="19" font-size="9.600" fill="#555" textLength="81.5">reservation_status</text><circle cx="99" cy="15.700000000000045" r="4.200" fill="#DC5B57"/><text x="105.5" y="19" font-size="9.600" fill="#555">Canceled</text><circle cx="155.5" cy="15.700000000000045" r="4.200" fill="#33AE81"/><text x="161.5" y="19" font-size="9.600" fill="#555">Check-Out</text><circle cx="218.5" cy="15.700000000000045" r="4.200" fill="#4A8BDB"/><text x="224.5" y="19" font-size="9.600" fill="#555">No-Show</text></svg>
<svg class="r" style="left:910.0px;top:620.0px;" width="386" height="297"><text x="4.5" y="19" font-size="9.600" fill="#555" textLength="34.800">country</text><circle cx="51.5" cy="15.700000000000045" r="4.200" fill="#A64341"/><text x="57.700000000000045" y="19" font-size="9.600" fill="#555" letter-spacing="-.2">PRT</text><circle cx="84" cy="15.700000000000045" r="4.200" fill="#EB9E9C"/><text x="90.20000000000005" y="19" font-size="9.600" fill="#555" letter-spacing="-.2">GBR</text><circle cx="118" cy="15.700000000000045" r="4.200" fill="#4A8BDB"/><text x="124.20000000000005" y="19" font-size="9.600" fill="#555" letter-spacing="-.2">FRA</text><circle cx="151" cy="15.700000000000045" r="4.200" fill="#4B5C88"/><text x="157.20000000000005" y="19" font-size="9.600" fill="#555" letter-spacing="-.2">ESP</text><circle cx="182.5" cy="15.700000000000045" r="4.200" fill="#F2C811"/><text x="188.70000000000005" y="19" font-size="9.600" fill="#555" letter-spacing="-.2">DEU</text><circle cx="217" cy="15.700000000000045" r="4.200" fill="#DC5B57"/><text x="223.20000000000005" y="19" font-size="9.600" fill="#555" letter-spacing="-.2">ITA</text><circle cx="246.5" cy="15.700000000000045" r="4.200" fill="#33AE81"/><text x="252.70000000000005" y="19" font-size="9.600" fill="#555" letter-spacing="-.2">IRL</text><circle cx="275.5" cy="15.700000000000045" r="4.200" fill="#B3B3B3"/><text x="281.70000000000005" y="19" font-size="9.600" fill="#555" letter-spacing="-.2">BEL</text><circle cx="306.5" cy="15.700000000000045" r="4.200" fill="#94C6EE"/><text x="312.70000000000005" y="19" font-size="9.600" fill="#555" letter-spacing="-.2">BRA</text><circle cx="340.5" cy="15.700000000000045" r="4.200" fill="#DE8F5F"/><text x="346.70000000000005" y="19" font-size="9.600" fill="#555" letter-spacing="-.2">USA</text><rect x="5.0" y="27.7" width="181.0" height="267.3" fill="#A64341"/><text x="9.3" y="43.1" font-size="10.200" fill="#fff" stroke="#fff" stroke-width=".4" letter-spacing="-.15">PRT</text><rect x="187.3" y="27.7" width="103.4" height="114.0" fill="#EB9E9C"/><text x="191.6" y="43.1" font-size="10.200" fill="#fff" stroke="#fff" stroke-width=".4" letter-spacing="-.15">GBR</text><rect x="292.3" y="27.7" width="89.4" height="114.0" fill="#4A8BDB"/><text x="296.6" y="43.1" font-size="10.200" fill="#fff" stroke="#fff" stroke-width=".4" letter-spacing="-.15">FRA</text><rect x="187.3" y="144.0" width="103.4" height="80.7" fill="#4B5C88"/><text x="191.6" y="159.4" font-size="10.200" fill="#fff" stroke="#fff" stroke-width=".4" letter-spacing="-.15">ESP</text><rect x="187.3" y="226.3" width="103.4" height="68.7" fill="#F2C811"/><text x="191.6" y="241.7" font-size="10.200" fill="#fff" stroke="#fff" stroke-width=".4" letter-spacing="-.15">DEU</text><rect x="292.3" y="144.0" width="46.0" height="77.0" fill="#DC5B57"/><text x="296.6" y="159.4" font-size="10.200" fill="#fff" stroke="#fff" stroke-width=".4" letter-spacing="-.15">ITA</text><rect x="340.0" y="144.0" width="41.7" height="77.0" fill="#33AE81"/><text x="344.3" y="159.4" font-size="10.200" fill="#fff" stroke="#fff" stroke-width=".4" letter-spacing="-.15">IRL</text><rect x="292.3" y="222.7" width="60.4" height="36.0" fill="#B3B3B3"/><text x="296.6" y="238.1" font-size="10.200" fill="#fff" stroke="#fff" stroke-width=".4" letter-spacing="-.15">BEL</text><rect x="292.3" y="260.3" width="60.4" height="34.7" fill="#94C6EE"/><text x="296.6" y="275.7" font-size="10.200" fill="#fff" stroke="#fff" stroke-width=".4" letter-spacing="-.15">BRA</text><rect x="354.7" y="222.7" width="27.0" height="72.3" fill="#DE8F5F"/></svg>
<div class="r" style="left:1330.0px;top:243.0px;width:48.0px;height:741.0px;background:#ffffff;"></div>
<div class="r" style="left:1330.0px;top:932.0px;width:48.0px;height:52.0px;background:#f3f2f1;"></div>
<svg class="r" style="left:1344.0px;top:266.0px;" width="16" height="20"><path d="M12 2l-8 8 8 8" fill="none" stroke="#252423" stroke-width="1.500"/></svg>
<svg class="r" style="left:1343.0px;top:336.0px;" width="24" height="24"><path d="M20.500 2.500v17l-5.500-5.500-10.500-2.200v-1.600l10.500-2.200z" fill="none" stroke="#3b3a39" stroke-width="1.300" stroke-linejoin="round"/></svg>
<div class="t" style="left:1352px;top:364px;font-size:22px;font-weight:400;-webkit-text-stroke:.7px #1b1d2e;color:#1b1d2e;transform:rotate(90deg);transform-origin:left center;letter-spacing:.15px;">Filters</div>
<div class="r" style="left:1378.0px;top:243.0px;width:271.0px;height:741.0px;background:#f3f2f1;"></div>
<div class="r" style="left:1377.0px;top:243.0px;width:1.5px;height:741.0px;background:#e1dfdd;"></div>
<div class="t" style="left:1397.0px;top:269.8px;font-size:23.4px;color:#3b3a39;letter-spacing:0.426px;-webkit-text-stroke:.55px #3b3a39;">Visualizations</div>
<svg class="r" style="left:1616.0px;top:266.0px;" width="16" height="20"><path d="M4 2l8 8-8 8" fill="none" stroke="#252423" stroke-width="1.500"/></svg>
<svg class="r" style="left:1392.9px;top:323.0px;overflow:visible;" width="28" height="28"><rect x="2" y="4.3" width="6.00" height="6.00" fill="#fafafa" stroke="#323130" stroke-width="1.1"/><rect x="8" y="4.3" width="9.30" height="6.00" fill="#83bbec" stroke="#1a73c4" stroke-width="1.1"/><rect x="2" y="14.9" width="8.60" height="6.40" fill="#fafafa" stroke="#323130" stroke-width="1.1"/><rect x="10.6" y="14.9" width="12.00" height="6.40" fill="#c8c6c4" stroke="#8a8886" stroke-width="1.1"/><path d="M1.300 1V25.100H25.600" fill="none" stroke="#323130" stroke-width="1.400"/></svg>
<svg class="r" style="left:1435.0px;top:323.0px;overflow:visible;" width="28" height="28"><rect x="5.7" y="17.3" width="6.00" height="7.20" fill="#fafafa" stroke="#323130" stroke-width="1.1"/><rect x="5.7" y="8.3" width="6.00" height="9.00" fill="#83bbec" stroke="#1a73c4" stroke-width="1.1"/><rect x="16.3" y="15.6" width="6.00" height="8.90" fill="#fafafa" stroke="#323130" stroke-width="1.1"/><rect x="16.3" y="4.3" width="6.00" height="11.30" fill="#c8c6c4" stroke="#8a8886" stroke-width="1.1"/><path d="M1.300 1V25.100H25.600" fill="none" stroke="#323130" stroke-width="1.400"/></svg>
<svg class="r" style="left:1477.1px;top:323.0px;overflow:visible;" width="28" height="28"><rect x="1.5" y="2.3" width="22.50" height="5.30" fill="#83bbec" stroke="#1a73c4" stroke-width="1.1"/><rect x="1.5" y="7.6" width="13.30" height="4.40" fill="#fafafa" stroke="#323130" stroke-width="1.1"/><rect x="1.5" y="12.9" width="9.90" height="4.70" fill="#c8c6c4" stroke="#8a8886" stroke-width="1.1"/><rect x="1.5" y="18.9" width="16.50" height="4.30" fill="#fafafa" stroke="#323130" stroke-width="1.1"/><path d="M1.200 1.600V25.300M0.800 1.600H24.500M0.800 25.300H25.300" fill="none" stroke="#323130" stroke-width="1.300"/></svg>
<svg class="r" style="left:1519.1px;top:323.0px;overflow:visible;" width="28" height="28"><rect x="2.6" y="2.3" width="5.30" height="22.70" fill="#83bbec" stroke="#1a73c4" stroke-width="1.1"/><rect x="7.9" y="11.6" width="4.60" height="13.40" fill="#fafafa" stroke="#323130" stroke-width="1.1"/><rect x="13.2" y="14.9" width="5.30" height="10.10" fill="#c8c6c4" stroke="#8a8886" stroke-width="1.1"/><rect x="19.2" y="7.9" width="4.60" height="17.10" fill="#fafafa" stroke="#323130" stroke-width="1.1"/><path d="M1.300 1V25.100H25.600" fill="none" stroke="#323130" stroke-width="1.400"/></svg>
<svg class="r" style="left:1561.2px;top:323.0px;overflow:visible;" width="28" height="28"><rect x="2" y="4.3" width="4.30" height="6.00" fill="#fafafa" stroke="#323130" stroke-width="1.1"/><rect x="6.3" y="4.3" width="15.70" height="6.00" fill="#83bbec" stroke="#1a73c4" stroke-width="1.1"/><rect x="2" y="14.9" width="12.90" height="6.40" fill="#fafafa" stroke="#323130" stroke-width="1.1"/><rect x="14.9" y="14.9" width="7.10" height="6.40" fill="#c8c6c4" stroke="#8a8886" stroke-width="1.1"/><path d="M1.300 1V25.100H25.600" fill="none" stroke="#323130" stroke-width="1.400"/></svg>
<svg class="r" style="left:1603.3px;top:323.0px;overflow:visible;" width="28" height="28"><rect x="4.7" y="19.6" width="6.30" height="4.90" fill="#fafafa" stroke="#323130" stroke-width="1.1"/><rect x="4.7" y="4.3" width="6.30" height="15.30" fill="#83bbec" stroke="#1a73c4" stroke-width="1.1"/><rect x="15.6" y="11.6" width="6.40" height="12.90" fill="#fafafa" stroke="#323130" stroke-width="1.1"/><rect x="15.6" y="4.3" width="6.40" height="7.30" fill="#c8c6c4" stroke="#8a8886" stroke-width="1.1"/><path d="M1.300 1V25.100H25.600" fill="none" stroke="#323130" stroke-width="1.400"/></svg>
<svg class="r" style="left:1392.9px;top:359.1px;overflow:visible;" width="28" height="28"><path d="M1.300 1V25.100H25.600" fill="none" stroke="#323130" stroke-width="1.400"/><path d="M2.7 20.7L16.6 5.4L24.6 13.4" fill="none" stroke="#1a73c4" stroke-width="1.3" stroke-linejoin="miter"/><path d="M2 14.7L10 6.8L15.9 13.4L24.6 6.1" fill="none" stroke="#323130" stroke-width="1.3" stroke-linejoin="miter"/></svg>
<svg class="r" style="left:1435.0px;top:359.1px;overflow:visible;" width="28" height="28"><path d="M15.7 11.4L19.9 2.1L25 12.1L25 24.7L15.7 24.7Z" fill="#c8c6c4" stroke="#8a8886" stroke-width="1" stroke-linejoin="miter"/><path d="M1.1 16.1L9 3.5L15.7 11.4L7.7 21.4Z" fill="#fafafa" stroke="#323130" stroke-width="1.2" stroke-linejoin="miter"/><path d="M1.1 16.1L7.7 21.4L15.4 11.4L25 25L1.1 25Z" fill="#83bbec" stroke="#1a73c4" stroke-width="1.2" stroke-linejoin="miter"/></svg>
<svg class="r" style="left:1477.1px;top:359.1px;overflow:visible;" width="28" height="28"><path d="M1.5 14.7L8.8 21.4L17.7 12.7L25.4 20.3L25.4 25L1.5 25Z" fill="#fafafa" stroke="#fafafa" stroke-width="0" stroke-linejoin="miter"/><path d="M1.5 6.8L8.8 13.4L17.7 4.5L25.4 8.4L25.4 20.3L17.7 12.7L8.8 21.4L1.5 14.7Z" fill="#83bbec" stroke="#1a73c4" stroke-width="1.3" stroke-linejoin="miter"/><path d="M1.300 1V25.100H25.600" fill="none" stroke="#323130" stroke-width="1.400"/></svg>
<svg class="r" style="left:1519.1px;top:359.1px;overflow:visible;" width="28" height="28"><rect x="5.2" y="19.4" width="6.00" height="5.10" fill="#fafafa" stroke="#323130" stroke-width="1.1"/><rect x="5.2" y="4.8" width="6.00" height="14.60" fill="#83bbec" stroke="#1a73c4" stroke-width="1.1"/><rect x="15.8" y="10.8" width="6.00" height="13.70" fill="#fafafa" stroke="#323130" stroke-width="1.1"/><rect x="15.8" y="4.8" width="6.00" height="6.00" fill="#c8c6c4" stroke="#8a8886" stroke-width="1.1"/><path d="M1.300 1V25.100H25.600" fill="none" stroke="#323130" stroke-width="1.400"/><path d="M1.9 22.7L9.2 14.1L15.8 19.4L24.5 11.4" fill="none" stroke="#323130" stroke-width="1.3" stroke-linejoin="miter"/></svg>
<svg class="r" style="left:1561.2px;top:359.1px;overflow:visible;" width="28" height="28"><rect x="5" y="12.7" width="5.90" height="11.80" fill="#83bbec" stroke="#1a73c4" stroke-width="1.1"/><rect x="10.9" y="3.5" width="6.00" height="21.00" fill="#fafafa" stroke="#323130" stroke-width="1.1"/><rect x="16.9" y="8.8" width="5.30" height="15.70" fill="#c8c6c4" stroke="#8a8886" stroke-width="1.1"/><path d="M1.300 1V25.100H25.600" fill="none" stroke="#323130" stroke-width="1.400"/><path d="M1.6 23.4L9.6 14.1L15.6 19.4L24.2 11.4" fill="none" stroke="#323130" stroke-width="1.3" stroke-linejoin="miter"/></svg>
<svg class="r" style="left:1603.3px;top:359.1px;overflow:visible;" width="28" height="28"><path d="M3.400 6.500C8 6.500 9 10.500 13.400 10.500S19 5.200 23.400 5.200" fill="none" stroke="#8a8886" stroke-width="3.800"/><path d="M3.400 17.500H8M10.500 17.500H16M18.500 17.500H23.400" fill="none" stroke="#d9730d" stroke-width="3.400"/><path d="M3.400 12C8 12 9 18.600 13.400 18.600S19 10 23.400 10" fill="none" stroke="#1a73c4" stroke-width="4"/><path d="M3.400 12C8 12 9 18.600 13.400 18.600S19 10 23.400 10" fill="none" stroke="#83bbec" stroke-width="1.600"/><path d="M3.400 6.500C8 6.500 9 10.500 13.400 10.500S19 5.200 23.400 5.200" fill="none" stroke="#c8c6c4" stroke-width="1.500"/><path d="M1.300 1V25.100H25.600" fill="none" stroke="#323130" stroke-width="1.400"/></svg>
<svg class="r" style="left:1392.9px;top:395.1px;overflow:visible;" width="28" height="28"><rect x="4" y="8.6" width="5.30" height="15.90" fill="#fafafa" stroke="#323130" stroke-width="1.1"/><rect x="10" y="8.6" width="4.60" height="7.30" fill="#8a8886" stroke="#8a8886" stroke-width="1.1"/><rect x="14.6" y="2.6" width="3.30" height="13.30" fill="#0f5fae" stroke="#1a73c4" stroke-width="1.1"/><rect x="17.9" y="2.6" width="6.00" height="21.90" fill="#fafafa" stroke="#323130" stroke-width="1.1"/><path d="M1.300 1V25.100H25.600" fill="none" stroke="#323130" stroke-width="1.400"/></svg>
<svg class="r" style="left:1435.0px;top:395.1px;overflow:visible;" width="28" height="28"><rect x="1.1" y="2.6" width="23.90" height="7.30" fill="#83bbec" stroke="#1a73c4" stroke-width="1.3"/><rect x="4.4" y="9.9" width="17.30" height="7.30" fill="#83bbec" stroke="#1a73c4" stroke-width="1.3"/><rect x="8.4" y="17.2" width="9.30" height="6.00" fill="#83bbec" stroke="#1a73c4" stroke-width="1.3"/></svg>
<svg class="r" style="left:1477.1px;top:395.1px;overflow:visible;" width="28" height="28"><path d="M1.300 1V25.100H25.600" fill="none" stroke="#323130" stroke-width="1.400"/><rect x="18.8" y="2.6" width="3.70" height="3.70" fill="#323130" stroke="#323130" stroke-width="0"/><rect x="5.1" y="17.2" width="4.00" height="4.00" fill="#323130" stroke="#323130" stroke-width="0"/><rect x="5.1" y="6.6" width="4.00" height="3.70" fill="#83bbec" stroke="#83bbec" stroke-width="0"/><rect x="12.1" y="10.3" width="3.70" height="4.00" fill="#83bbec" stroke="#83bbec" stroke-width="0"/><rect x="18.8" y="16.3" width="3.70" height="3.90" fill="#83bbec" stroke="#83bbec" stroke-width="0"/></svg>
<svg class="r" style="left:1519.1px;top:395.1px;overflow:visible;" width="28" height="28"><circle cx="12.800" cy="13.200" r="11.700" fill="#fafafa" stroke="#323130" stroke-width="1.300"/><path d="M12.800 13.200V1.500A11.700 11.700 0 0 1 21.800 20.700z" fill="#83bbec" stroke="#1a73c4" stroke-width="1.200" stroke-linejoin="round"/></svg>
<svg class="r" style="left:1561.2px;top:395.1px;overflow:visible;" width="28" height="28"><circle cx="12.900" cy="13.200" r="8.700" fill="none" stroke="#83bbec" stroke-width="6.300"/><circle cx="12.900" cy="13.200" r="11.800" fill="none" stroke="#1a73c4" stroke-width="1.200"/><circle cx="12.900" cy="13.200" r="5.400" fill="none" stroke="#1a73c4" stroke-width="1.200"/><path d="M1.100 13.200A11.800 11.800 0 0 1 14.900 1.600L13.800 7.900A5.400 5.400 0 0 0 7.500 13.200Z" fill="#fafafa" stroke="#323130" stroke-width="1.100"/></svg>
<svg class="r" style="left:1603.3px;top:395.1px;overflow:visible;" width="28" height="28"><rect x="0.7" y="1.5" width="23.90" height="23.70" fill="#fafafa" stroke="#323130" stroke-width="1.3"/><rect x="0.7" y="1.5" width="12.00" height="12.40" fill="#83bbec" stroke="#1a73c4" stroke-width="1.2"/><rect x="0.7" y="13.9" width="12.00" height="11.30" fill="#83bbec" stroke="#1a73c4" stroke-width="1.2"/><path d="M12.700 8.600H24.600M18.700 8.600V25.200M18.700 16.500H24.600M12.700 1.500V25.200" fill="none" stroke="#323130" stroke-width="1.300"/></svg>
<svg class="r" style="left:1392.9px;top:431.1px;overflow:visible;" width="28" height="28"><circle cx="13.900" cy="12.100" r="7.300" fill="#fafafa" stroke="#323130" stroke-width="1.300"/><path d="M9 8.500c1.500-2.500 4-3 5.500-2.500l-1 2 1.500 1.500-2 1.500-1.500-.500-1 1.500zM16 7l3 .500 1.500 3-2 .500zM12.500 13.500l3-.500 2.500 1.500-1 3.500-3 .500-1-2.500z" fill="#2e9b47"/><path d="M10.500 1.800A11 11 0 0 0 22.500 19.500M5.300 24.700H22.600M14 21.500V24.700" fill="none" stroke="#323130" stroke-width="1.400"/></svg>
<svg class="r" style="left:1435.0px;top:431.1px;overflow:visible;" width="28" height="28"><path d="M1.100 3.500L7.100 4.100 10.400 6.100 14.400 4.800 19.700 2.800H25V14.800L22.300 19.400 17 21.400 11.700 23.800 6.400 20.700 1.700 16.800 1.100 13.400 3.100 9.500Z" fill="#c8c6c4" stroke="#8a8886" stroke-width="1" stroke-linejoin="round"/><path d="M1.100 3.500L7.100 4.100 10.400 6.100 11.800 5.700 11.300 9 12 12.800 5 13.200 2 12 3.100 9.500Z" fill="#83bbec" stroke="#1a73c4" stroke-width="1.100" stroke-linejoin="round"/><path d="M13 13.500L25 12.800V14.800L22.300 19.400 17 21.400 12.800 22.800 11.800 19.500 13.800 16.500Z" fill="#83bbec" stroke="#1a73c4" stroke-width="1.100" stroke-linejoin="round"/></svg>
<svg class="r" style="left:1477.1px;top:431.1px;overflow:visible;" width="28" height="28"><path d="M1 18.500A12.200 12.200 0 0 1 8.500 7.300L11.200 12.300A6.800 6.800 0 0 0 6.500 18.500Z" fill="#fafafa" stroke="#323130" stroke-width="1.200" stroke-linejoin="round"/><path d="M8.500 7.300A12.200 12.200 0 0 1 25.400 18.500H20A6.800 6.800 0 0 0 11.200 12.300Z" fill="#83bbec" stroke="#1a73c4" stroke-width="1.200" stroke-linejoin="round"/><path d="M13.200 17.500L18.500 12" stroke="#323130" stroke-width="1.500"/><circle cx="13.200" cy="17.500" r="1.500" fill="#323130"/></svg>
<svg class="r" style="left:1519.1px;top:431.1px;overflow:visible;" width="28" height="28"><rect x="0.8" y="4.1" width="24.30" height="18.20" fill="#fafafa" stroke="#323130" stroke-width="1.4"/><text x="13" y="17.300" font-size="11.500" fill="#1a73c4" text-anchor="middle" letter-spacing="-.3" textLength="17.500" lengthAdjust="spacingAndGlyphs">123</text><path d="M4 19.500H22" stroke="#8a8886" stroke-width=".9"/></svg>
<svg class="r" style="left:1561.2px;top:431.1px;overflow:visible;" width="28" height="28"><rect x="0.7" y="1.2" width="24.20" height="23.90" fill="#fafafa" stroke="#323130" stroke-width="1.4"/><path d="M5.200 6.100V20.700" stroke="#8a8886" stroke-width="1.100"/><path d="M7.600 7.700H20.600M7.600 15.800H20.600" stroke="#0f5fae" stroke-width="1.700"/><path d="M7.600 11.400H13.600M7.600 19.400H13.600" stroke="#8a8886" stroke-width="1.100"/></svg>
<svg class="r" style="left:1603.3px;top:431.1px;overflow:visible;" width="28" height="28"><rect x="0.7" y="2.8" width="24.30" height="19.50" fill="#fafafa" stroke="#323130" stroke-width="1.4"/><path d="M3.4 14.8L7.6 8.1L11.6 14.8Z" fill="#7fd18f" stroke="#2e9b47" stroke-width="1.1" stroke-linejoin="miter"/><path d="M13.3 7.5L22 7.5L17.6 13.4Z" fill="#f58a8c" stroke="#d13438" stroke-width="1.1" stroke-linejoin="miter"/><path d="M3.400 18.100H22" stroke="#8a8886" stroke-width="1.200"/></svg>
<svg class="r" style="left:1392.9px;top:467.2px;overflow:visible;" width="28" height="28"><rect x="0.9" y="1.3" width="24.30" height="23.90" fill="#fafafa" stroke="#323130" stroke-width="1.4"/><path d="M1.500 4H24.600" stroke="#c8c6c4" stroke-width="2.600"/><rect x="5.3" y="9.9" width="4.70" height="4.70" fill="#c8c6c4" stroke="#8a8886" stroke-width="1"/><rect x="5.3" y="16.6" width="4.70" height="4.60" fill="#c8c6c4" stroke="#8a8886" stroke-width="1"/><path d="M13.300 14.600H26.300L21.900 20V26.300H17.900V20Z" fill="#fafafa" stroke="#323130" stroke-width="1.300" stroke-linejoin="round"/><rect x="25.500" y="21" width="1.500" height="6" fill="#f3f2f1"/></svg>
<svg class="r" style="left:1435.0px;top:467.2px;overflow:visible;" width="28" height="28"><rect x="1.1" y="1.3" width="24.10" height="23.90" fill="#fafafa" stroke="#323130" stroke-width="1.4"/><path d="M1.700 3.600H24.600" stroke="#c8c6c4" stroke-width="3.200"/><path d="M9 5.300V25.200M17 5.300V25.200M1.100 11.300H25.200M1.100 17.900H25.200" stroke="#c8c6c4" stroke-width="1.500" fill="none"/><rect x="1.1" y="1.3" width="24.10" height="23.90" fill="none" stroke="#323130" stroke-width="1.4"/></svg>
<svg class="r" style="left:1477.1px;top:467.2px;overflow:visible;" width="28" height="28"><rect x="1.1" y="1.3" width="24.10" height="23.90" fill="#fafafa" stroke="#323130" stroke-width="1.4"/><path d="M1.700 3.600H24.600" stroke="#c8c6c4" stroke-width="3.200"/><rect x="17" y="5.300" width="8" height="12.600" fill="#83bbec"/><rect x="1.800" y="17.900" width="23.200" height="7" fill="#83bbec"/><path d="M9 5.300V25.200M17 5.300V25.200M1.100 11.300H25.200M1.100 17.900H25.200" stroke="#e1eefa" stroke-width="1.500" fill="none"/><path d="M17 5.300V25.200M1.800 17.900H25" stroke="#1a73c4" stroke-width="1" fill="none"/><rect x="1.1" y="1.3" width="24.10" height="23.90" fill="none" stroke="#323130" stroke-width="1.4"/></svg>
<svg class="r" style="left:1519.1px;top:467.2px;overflow:visible;" width="28" height="28"><text x="11.300" y="21.200" font-size="22.500" font-weight="700" fill="#2283d0" text-anchor="middle" textLength="12.500" lengthAdjust="spacingAndGlyphs">R</text></svg>
<svg class="r" style="left:1561.2px;top:467.2px;overflow:visible;" width="28" height="28"><text x="0.300" y="19.200" font-size="22.500" font-weight="700" fill="#2283d0" textLength="24.500" lengthAdjust="spacingAndGlyphs">Py</text></svg>
<svg class="r" style="left:1603.3px;top:467.2px;overflow:visible;" width="28" height="28"><path d="M2 6H18" stroke="#1a73c4" stroke-width="1.300"/><circle cx="20.600" cy="6" r="2.700" fill="#83bbec" stroke="#1a73c4" stroke-width="1.200"/><path d="M2 12.600H13.300M2 17.900H8" stroke="#8a8886" stroke-width="1.200"/><circle cx="14.900" cy="12.600" r="1.700" fill="#c8c6c4" stroke="#8a8886"/><circle cx="9.500" cy="17.900" r="1.700" fill="#c8c6c4" stroke="#8a8886"/><path d="M1.400 1.300V24.500H25.300" fill="none" stroke="#323130" stroke-width="1.400"/></svg>
<svg class="r" style="left:1392.9px;top:503.2px;overflow:visible;" width="28" height="28"><path d="M10 12.700H13.300M13.300 4V21M13.300 4H16.600M13.300 12.400H16.600M13.300 21H16.600" fill="none" stroke="#323130" stroke-width="1.300"/><rect x="0.9" y="9.1" width="9.10" height="6.60" fill="#83bbec" stroke="#1a73c4" stroke-width="1.2"/><rect x="16.6" y="1.4" width="8.60" height="5.30" fill="#83bbec" stroke="#1a73c4" stroke-width="1.2"/><rect x="16.6" y="9.7" width="8.60" height="5.30" fill="#83bbec" stroke="#1a73c4" stroke-width="1.2"/><rect x="16.6" y="18.4" width="8.60" height="5.30" fill="#83bbec" stroke="#1a73c4" stroke-width="1.2"/></svg>
<svg class="r" style="left:1435.0px;top:503.2px;overflow:visible;" width="28" height="28"><path d="M1.100 2.400H25V18.100H11.700L5.300 24.300L5.100 18.100H1.100Z" fill="#fafafa" stroke="#1a73c4" stroke-width="1.500" stroke-linejoin="miter"/></svg>
<svg class="r" style="left:1477.1px;top:503.2px;overflow:visible;" width="28" height="28"><rect x="1.2" y="1.4" width="23.90" height="23.60" fill="#fafafa" stroke="#1a73c4" stroke-width="1.4"/><path d="M9 25c0-4 4-4.500 5-8s-1-5 2-7.500 5-1.500 5-5l3.500-.500V25z" fill="#83bbec" stroke="none"/><path d="M11 25c0-3 3.500-4 4.500-7.500s-1-5 2-7.500 4.500-2 4.500-5" fill="none" stroke="#fafafa" stroke-width="1.100"/><rect x="-.5" y="0" width="8.500" height="3" fill="#f3f2f1"/><path d="M3.600 .3c-2.200 0-3.700 1.400-3.700 3.200v6.500l3.700 4.500 3.700-4.500V3.500c0-1.800-1.500-3.200-3.700-3.200z" fill="#d9730d"/><ellipse cx="3.600" cy="4.800" rx="1.800" ry="1.400" fill="#f3f2f1"/><circle cx="24.300" cy="14.800" r="2.100" fill="#d9730d" stroke="#f3f2f1" stroke-width=".6"/><circle cx="22.100" cy="21.700" r="3.700" fill="#d9730d" stroke="#f3f2f1" stroke-width=".6"/></svg>
<svg class="r" style="left:1519.1px;top:503.2px;overflow:visible;" width="28" height="28"><g fill="none" stroke="#323130" stroke-width="1.500" stroke-linejoin="round"><path d="M9.500 1.500L.600 12.200c-.5.600-.5 1.400 0 2L9.500 25c.5.600 1.500.600 2 0L20.300 14.200c.5-.600.5-1.400 0-2L11.500 1.500c-.5-.600-1.500-.600-2 0z"/><path d="M15.200 1.500L6.400 12.200c-.5.600-.5 1.400 0 2L15.200 25c.5.600 1.500.600 2 0L26 14.200c.5-.600.5-1.400 0-2L17.200 1.500c-.5-.600-1.500-.600-2 0z"/></g></svg>
<svg class="r" style="left:1561.2px;top:503.2px;overflow:visible;" width="28" height="28"><circle cx="3.600" cy="10.400" r="1.400" fill="#323130"/><circle cx="13" cy="10.400" r="1.400" fill="#323130"/><circle cx="22.200" cy="10.400" r="1.400" fill="#323130"/></svg>
<div class="r" style="left:1378.0px;top:535.0px;width:271.0px;height:1.0px;background:#e1dfdd;"></div>
<svg class="r" style="left:1408.0px;top:547.0px;" width="38" height="34"><g fill="none" stroke="#252423" stroke-width="1.500"><path d="M4.100 1.700H27.800" /><rect x="4.800" y="6.400" width="28.600" height="9" stroke-dasharray="2.300 1.600"/><rect x="4.800" y="19.700" width="28.600" height="9.500" stroke-dasharray="2.300 1.600"/></g></svg>
<svg class="r" style="left:1472.0px;top:547.0px;" width="32" height="34"><g fill="none" stroke="#252423" stroke-width="1.600" stroke-linejoin="round"><rect x="2.500" y="2.300" width="20.600" height="5.400" rx="1.500"/><path d="M23.100 4.700H27.400V12.300H14.200V16.300"/><rect x="11.200" y="16.300" width="6" height="13.600" rx="1"/></g></svg>
<div class="r" style="left:1397.0px;top:584.2px;width:60.2px;height:5.5px;background:#f2c811;border-radius:3px;"></div>
<div class="t" style="left:1396.6px;top:589.4px;font-size:17.5px;color:#252423;letter-spacing:-0.323px;">Values</div>
<div class="r" style="left:1384.500px;top:617.500px;width:250px;height:39px;background:#fff;border:2px dotted #cdcbc9;"></div>
<div class="t" style="left:1401.0px;top:630.7px;font-size:17.5px;color:#252423;letter-spacing:0.217px;">Add data fields here</div>
<div class="t" style="left:1400.0px;top:685.4px;font-size:23.4px;color:#3b3a39;letter-spacing:1.054px;-webkit-text-stroke:.55px #3b3a39;">Drill through</div>
<div class="t" style="left:1392.2px;top:737.4px;font-size:17.5px;color:#252423;letter-spacing:0.214px;">Cross-report</div>
<div class="t" style="left:1405.6px;top:780.2px;font-size:17.5px;color:#252423;letter-spacing:0.688px;">Off</div>
<svg class="r" style="left:1434.0px;top:778.0px;" width="50" height="22"><path d="M19 10.500h28.500" stroke="#605e5c" stroke-width="2.200"/><circle cx="10.700" cy="10.500" r="7.300" fill="#f3f2f1" stroke="#605e5c" stroke-width="2.400"/></svg>
<div class="t" style="left:1392.2px;top:833.4px;font-size:17.5px;color:#252423;letter-spacing:0.085px;">Keep all filters</div>
<div class="t" style="left:1405.6px;top:876.2px;font-size:17.5px;color:#252423;letter-spacing:-0.348px;">On</div>
<svg class="r" style="left:1432.0px;top:872.0px;" width="52" height="26"><path d="M3.600 12.700h28" stroke="#605e5c" stroke-width="2.500"/><circle cx="38.800" cy="12.700" r="9.300" fill="#605e5c"/></svg>
<div class="r" style="left:1384.500px;top:915.500px;width:250px;height:70px;border:2px dotted #cdcbc9;border-bottom:none;"></div>
<svg class="r" style="left:1388.0px;top:920.0px;" width="250" height="66"><rect x="2" y="1.800" width="244.500" height="61.500" rx="2.500" fill="#edebe9" stroke="#c3c1bf" stroke-width="1.700"/></svg>
<div class="t" style="left:1402.6px;top:930.4px;font-size:17.5px;color:#252423;letter-spacing:0.468px;">country</div>
<div class="t" style="left:1402.6px;top:958.4px;font-size:17.5px;color:#252423;letter-spacing:-0.057px;">is (All)</div>
<svg class="r" style="left:1544.0px;top:928.0px;" width="22" height="16"><path d="M3 4l8 8 8-8" fill="none" stroke="#252423" stroke-width="1.400"/></svg>
<svg class="r" style="left:1576.0px;top:928.0px;" width="18" height="18"><path d="M3 3l12 12M15 3L3 15" fill="none" stroke="#252423" stroke-width="1.400"/></svg>
<svg class="r" style="left:1605.0px;top:926.0px;" width="20" height="22"><g fill="none" stroke="#252423" stroke-width="1.400"><rect x="3.500" y="10.500" width="13" height="9"/><path d="M6 7.500v-.5c0-5 8-5 8 0v3.500"/></g></svg>
<div class="r" style="left:1640.5px;top:598.0px;width:8.0px;height:314.0px;background:#c8c6c4;border-radius:4px;"></div>
<div class="r" style="left:1649.3px;top:243.0px;width:1.4px;height:741.0px;background:#dcdad8;"></div>
<div class="r" style="left:1651.0px;top:243.0px;width:269.0px;height:741.0px;background:#f3f2f1;"></div>
<div class="t" style="left:1668.6px;top:269.8px;font-size:23.4px;color:#3b3a39;letter-spacing:-0.245px;-webkit-text-stroke:.55px #3b3a39;">Fields</div>
<svg class="r" style="left:1888.0px;top:266.0px;" width="16" height="20"><path d="M4 2l8 8-8 8" fill="none" stroke="#252423" stroke-width="1.500"/></svg>
<svg class="r" style="left:1655.0px;top:320.0px;" width="262" height="48"><rect x="2.200" y="2.200" width="255.600" height="42.200" rx="3" fill="#fff" stroke="#c3c1bf" stroke-width="1.800"/></svg>
<svg class="r" style="left:1672.8px;top:330.5px;" width="28" height="28"><g fill="none" stroke="#252423" stroke-width="1.500"><circle cx="16" cy="10" r="6.500"/><path d="M11.500 15l-9 9.500"/></g></svg>
<div class="t" style="left:1710.4px;top:335.8px;font-size:18px;color:#252423;letter-spacing:-0.088px;">Search</div>
<div class="r" style="left:1651.0px;top:373.0px;width:269.0px;height:1.0px;background:#e1dfdd;"></div>
<div class="r" style="left:1912.0px;top:387.0px;width:8.0px;height:274.0px;background:#c8c6c4;border-radius:4px;"></div>
<svg class="r" style="left:1654.2px;top:396.0px;" width="20" height="20"><path d="M2 14l8-8 8 8" fill="none" stroke="#3b3a39" stroke-width="1.300"/></svg>
<svg class="r" style="left:1683.8px;top:397.5px;" width="22" height="20"><g fill="#252423"><rect x="1" y="1" width="19" height="17"/></g><g fill="#f3f2f1"><rect x="2.500" y="6" width="4.500" height="2.800"/><rect x="8.300" y="6" width="4.500" height="2.800"/><rect x="14" y="6" width="4.500" height="2.800"/><rect x="2.500" y="10" width="4.500" height="2.800"/><rect x="8.300" y="10" width="4.500" height="2.800"/><rect x="14" y="10" width="4.500" height="2.800"/><rect x="2.500" y="14" width="4.500" height="2.800"/><rect x="8.300" y="14" width="4.500" height="2.800"/><rect x="14" y="14" width="4.500" height="2.800"/></g></svg>
<div class="t" style="left:1722.4px;top:397.3px;font-size:18px;color:#252423;letter-spacing:0.023px;">hotel_bookings</div>
<div class="r" style="left:1698px;top:442.8px;width:14px;height:14px;border:2px solid #69675f;border-radius:3.500px;"></div>
<svg class="r" style="left:1722.0px;top:445.0px;" width="18" height="16"><path d="M14.300 4.200V1.900H2.200L8.400 8.100 2.200 14.200H14.300V11.800" fill="none" stroke="#252423" stroke-width="1.700" stroke-linejoin="miter"/></svg>
<div class="t" style="left:1753.6px;top:444.1px;font-size:18px;color:#252423;letter-spacing:0.013px;">adults</div>
<div class="r" style="left:1698px;top:478.8px;width:14px;height:14px;border:2px solid #69675f;border-radius:3.500px;"></div>
<div class="t" style="left:1753.6px;top:480.1px;font-size:18px;color:#252423;letter-spacing:0.013px;">agent</div>
<div class="r" style="left:1698px;top:514.8px;width:14px;height:14px;border:2px solid #69675f;border-radius:3.500px;"></div>
<svg class="r" style="left:1722.0px;top:517.0px;" width="18" height="16"><path d="M14.300 4.200V1.900H2.200L8.400 8.100 2.200 14.200H14.300V11.800" fill="none" stroke="#252423" stroke-width="1.700" stroke-linejoin="miter"/></svg>
<div class="t" style="left:1753.6px;top:516.1px;font-size:18px;color:#252423;letter-spacing:-0.369px;">arrival_date...</div>
<div class="r" style="left:1698px;top:550.8px;width:14px;height:14px;border:2px solid #69675f;border-radius:3.500px;"></div>
<div class="t" style="left:1753.6px;top:552.1px;font-size:18px;color:#252423;letter-spacing:-0.369px;">arrival_date...</div>
<div class="r" style="left:1698px;top:586.8px;width:14px;height:14px;border:2px solid #69675f;border-radius:3.500px;"></div>
<svg class="r" style="left:1721.0px;top:585.0px;" width="20" height="22"><g fill="none" stroke="#252423" stroke-width="1.500"><rect x="1.500" y="4.500" width="17" height="15.500"/><path d="M1.500 8.500h17M5.500 1.500v5M14.500 1.500v5"/><g stroke-width="2" stroke-dasharray="2.200 1.600"><path d="M4.500 11.500h12M4.500 14.500h12M4.500 17.500h12"/></g></g></svg>
<svg class="r" style="left:1666.5px;top:588.0px;" width="20" height="16"><path d="M2 4l8 8 8-8" fill="none" stroke="#3b3a39" stroke-width="1.300"/></svg>
<div class="t" style="left:1753.6px;top:588.1px;font-size:18px;color:#252423;letter-spacing:-0.369px;">arrival_date...</div>
<div class="r" style="left:1698px;top:622.8px;width:14px;height:14px;border:2px solid #69675f;border-radius:3.500px;"></div>
<svg class="r" style="left:1722.0px;top:625.0px;" width="18" height="16"><path d="M14.300 4.200V1.900H2.200L8.400 8.100 2.200 14.200H14.300V11.800" fill="none" stroke="#252423" stroke-width="1.700" stroke-linejoin="miter"/></svg>
<div class="t" style="left:1753.6px;top:624.1px;font-size:18px;color:#252423;letter-spacing:-0.369px;">arrival_date...</div>
<div class="r" style="left:1698px;top:658.8px;width:14px;height:14px;border:2px solid #69675f;border-radius:3.500px;"></div>
<div class="t" style="left:1753.6px;top:660.1px;font-size:18px;color:#252423;letter-spacing:-0.369px;">arrival_date...</div>
<div class="r" style="left:1698px;top:694.8px;width:14px;height:14px;border:2px solid #69675f;border-radius:3.500px;"></div>
<div class="t" style="left:1753.6px;top:696.1px;font-size:18px;color:#252423;letter-spacing:-0.452px;">assigned_ro...</div>
<div class="r" style="left:1698px;top:730.8px;width:14px;height:14px;border:2px solid #69675f;border-radius:3.500px;"></div>
<svg class="r" style="left:1722.0px;top:733.0px;" width="18" height="16"><path d="M14.300 4.200V1.900H2.200L8.400 8.100 2.200 14.200H14.300V11.800" fill="none" stroke="#252423" stroke-width="1.700" stroke-linejoin="miter"/></svg>
<div class="t" style="left:1753.6px;top:732.1px;font-size:18px;color:#252423;letter-spacing:-0.53px;">average_dai...</div>
<div class="r" style="left:1698px;top:766.8px;width:14px;height:14px;border:2px solid #69675f;border-radius:3.500px;"></div>
<svg class="r" style="left:1722.0px;top:769.0px;" width="18" height="16"><path d="M14.300 4.200V1.900H2.200L8.400 8.100 2.200 14.200H14.300V11.800" fill="none" stroke="#252423" stroke-width="1.700" stroke-linejoin="miter"/></svg>
<div class="t" style="left:1753.6px;top:768.1px;font-size:18px;color:#252423;letter-spacing:-0.289px;">babies</div>
<div class="r" style="left:1698px;top:802.8px;width:14px;height:14px;border:2px solid #69675f;border-radius:3.500px;"></div>
<svg class="r" style="left:1722.0px;top:805.0px;" width="18" height="16"><path d="M14.300 4.200V1.900H2.200L8.400 8.100 2.200 14.200H14.300V11.800" fill="none" stroke="#252423" stroke-width="1.700" stroke-linejoin="miter"/></svg>
<div class="t" style="left:1753.6px;top:804.1px;font-size:18px;color:#252423;letter-spacing:-0.165px;">booking_ch...</div>
<div class="r" style="left:1698px;top:838.8px;width:14px;height:14px;border:2px solid #69675f;border-radius:3.500px;"></div>
<svg class="r" style="left:1722.0px;top:841.0px;" width="18" height="16"><path d="M14.300 4.200V1.900H2.200L8.400 8.100 2.200 14.200H14.300V11.800" fill="none" stroke="#252423" stroke-width="1.700" stroke-linejoin="miter"/></svg>
<div class="t" style="left:1753.6px;top:840.1px;font-size:18px;color:#252423;letter-spacing:-0.186px;">Booking_id</div>
<div class="r" style="left:1698px;top:874.8px;width:14px;height:14px;border:2px solid #69675f;border-radius:3.500px;"></div>
<svg class="r" style="left:1722.0px;top:877.0px;" width="18" height="16"><path d="M14.300 4.200V1.900H2.200L8.400 8.100 2.200 14.200H14.300V11.800" fill="none" stroke="#252423" stroke-width="1.700" stroke-linejoin="miter"/></svg>
<div class="t" style="left:1753.6px;top:876.1px;font-size:18px;color:#252423;letter-spacing:0.065px;">children</div>
<div class="r" style="left:1698px;top:910.8px;width:14px;height:14px;border:2px solid #69675f;border-radius:3.500px;"></div>
<div class="t" style="left:1753.6px;top:912.1px;font-size:18px;color:#252423;letter-spacing:-0.007px;">company</div>
<div class="r" style="left:1698px;top:946.8px;width:14px;height:14px;border:2px solid #69675f;border-radius:3.500px;"></div>
<div class="t" style="left:1753.6px;top:948.1px;font-size:18px;color:#252423;letter-spacing:0.211px;">country</div>
<div class="r" style="left:1698px;top:982.800px;width:14px;height:14px;border:2px solid #69675f;border-radius:3.500px;"></div>
<div class="r" style="left:0.0px;top:984.0px;width:1920.0px;height:36.0px;background:#f3f2f1;"></div>
<div class="r" style="left:0.0px;top:984.0px;width:1920.0px;height:1.5px;background:#e1dfdd;"></div>
<div class="t" style="left:7.8px;top:994.2px;font-size:18px;color:#3b3a39;letter-spacing:-0.358px;">Page 1 of 4</div>
<div class="t" style="left:1625.0px;top:994.2px;font-size:18px;color:#3b3a39;letter-spacing:-0.017px;">Update available (click to download)</div>
</body></html>
